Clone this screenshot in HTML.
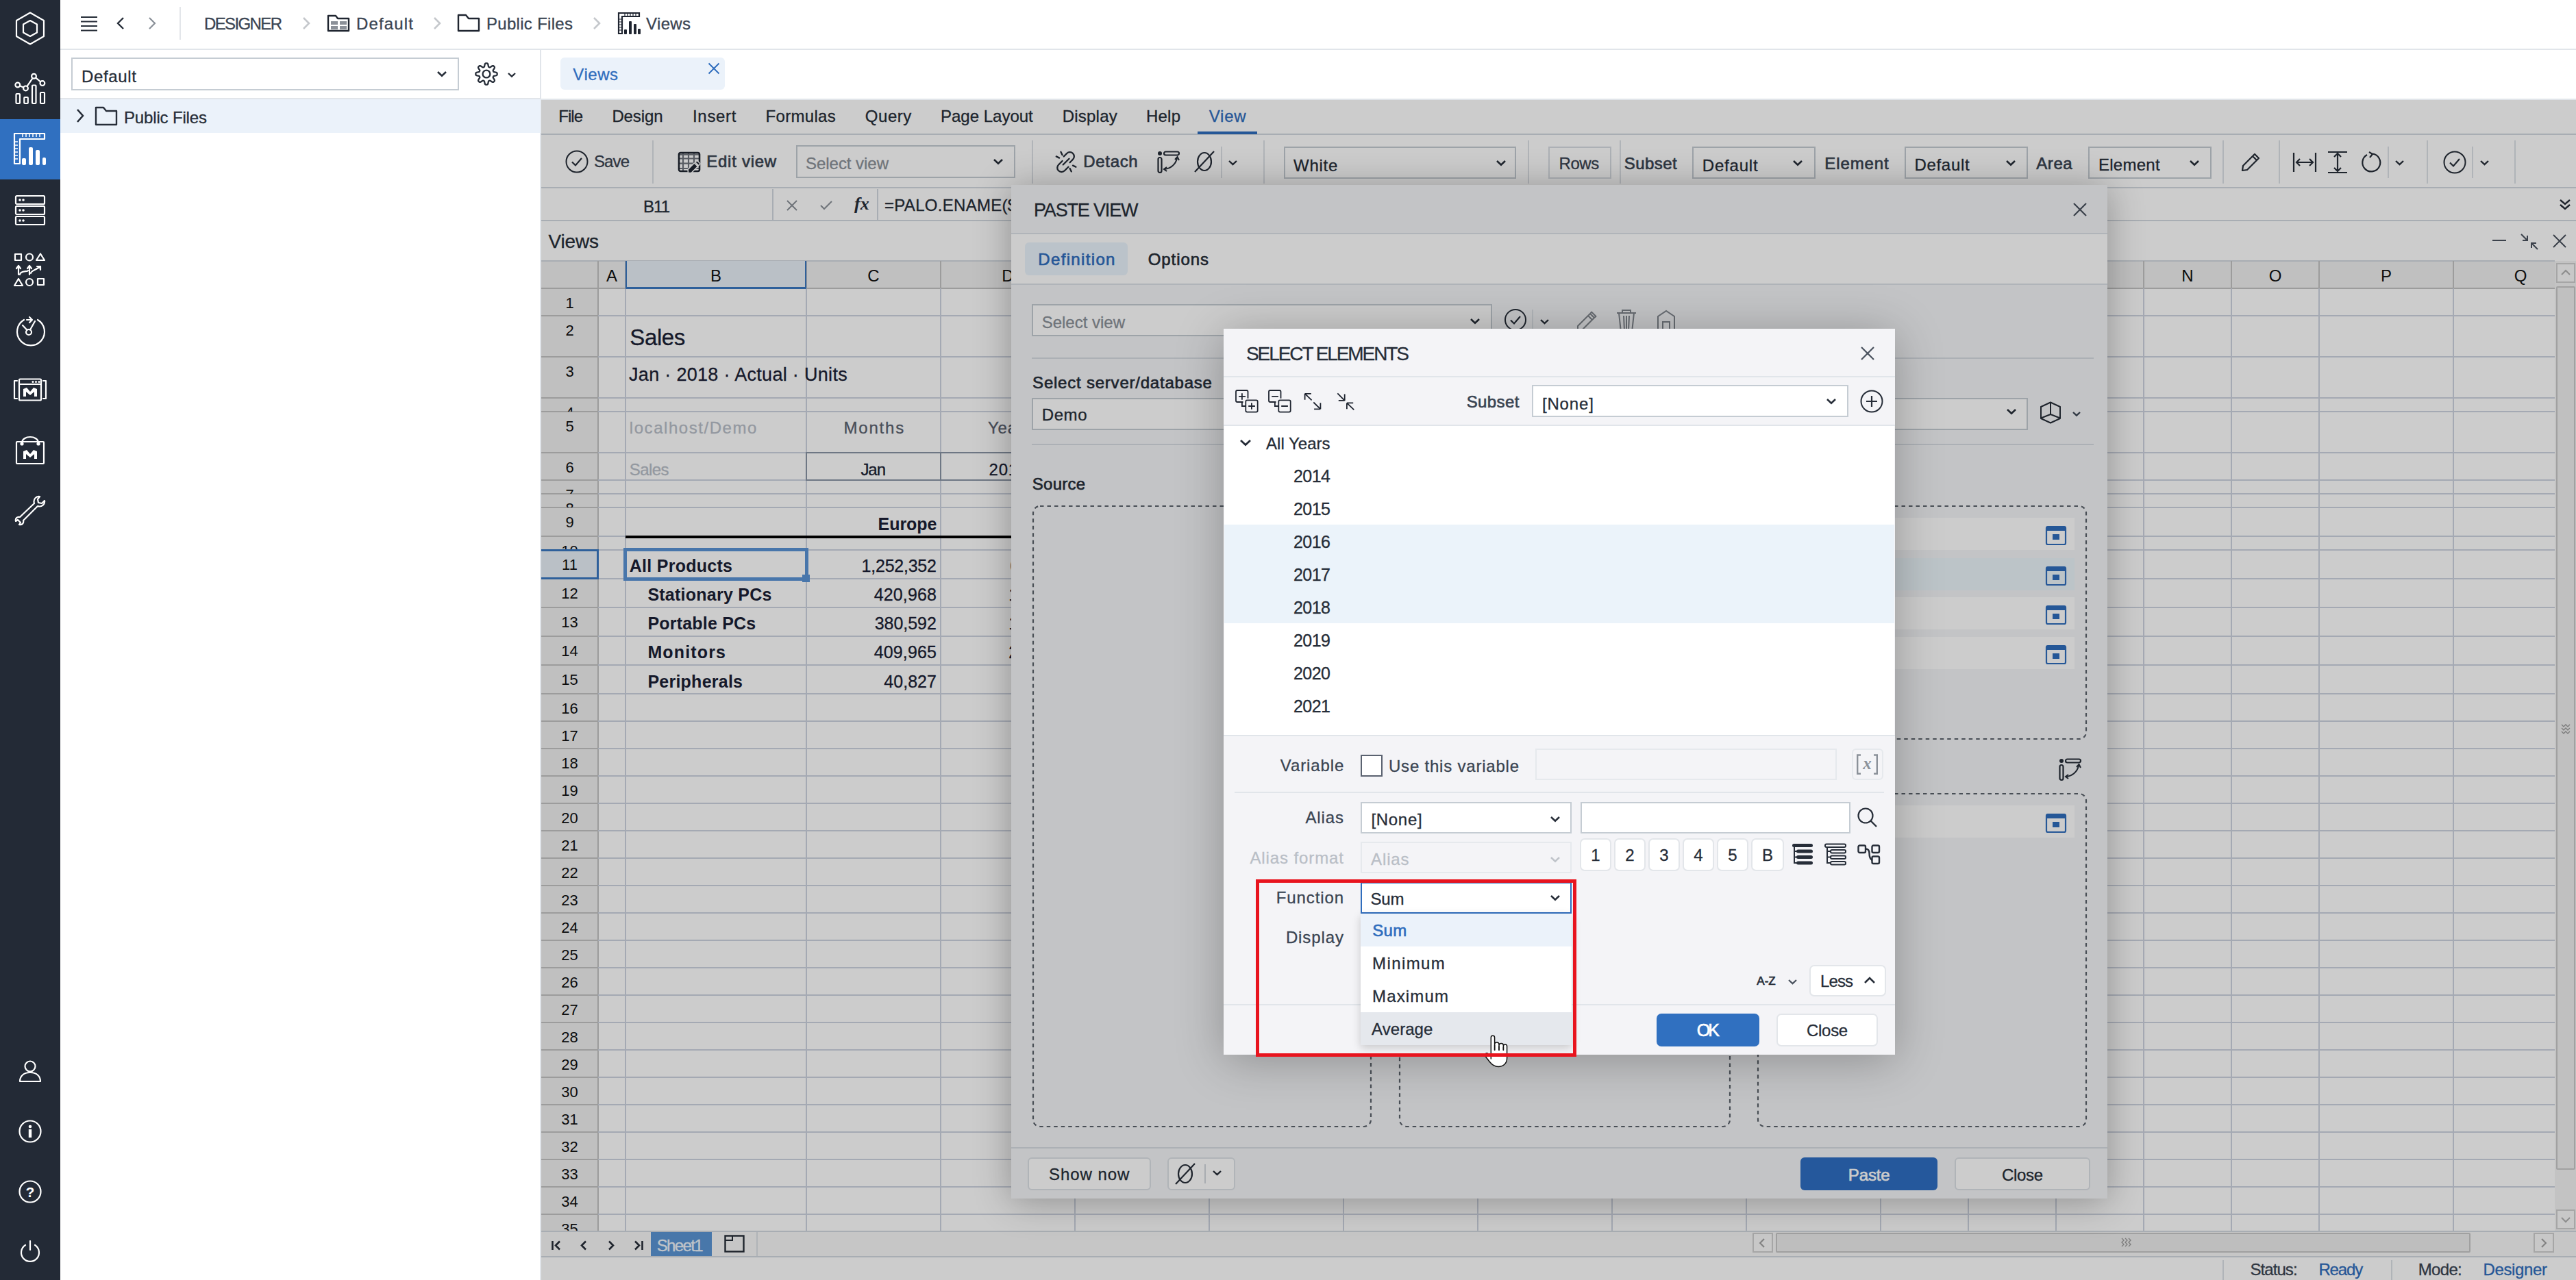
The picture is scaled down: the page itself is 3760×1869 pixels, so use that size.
<!DOCTYPE html>
<html><head><meta charset="utf-8"><style>
html,body{margin:0;padding:0;width:3760px;height:1869px;overflow:hidden;background:#fff;position:relative;font-family:"Liberation Sans",sans-serif}
div{position:absolute;box-sizing:border-box}
.t{white-space:nowrap}
svg{position:absolute;overflow:visible}
</style></head><body>
<div style="left:0px;top:0px;width:88px;height:1869px;background:#232a36"></div>
<div style="left:0px;top:174px;width:88px;height:88px;background:#3070c0"></div>
<svg style="position:absolute;left:20px;top:18px;" width="48" height="48" viewBox="0 0 48 48"><g fill="none" stroke="#fff" stroke-width="2.2" stroke-linejoin="round" stroke-linecap="round"><polygon points="24,0.5 44,12 44,35 24,46.5 4,35 4,12" /><polygon points="24,12 34,17.5 34,29.5 24,35 14,29.5 14,17.5"/></g></svg>
<svg style="position:absolute;left:0px;top:100px;" width="88" height="60" viewBox="0 0 88 60"><g fill="none" stroke="#fff" stroke-width="2.2" stroke-linejoin="round" stroke-linecap="round" stroke-width="2.3"><polyline points="25.8,24 37.5,28.9 49.5,11.3 61.9,21.6"/><circle cx="25.8" cy="24" r="3.4" fill="#232a36"/><circle cx="37.5" cy="28.9" r="3.4" fill="#232a36"/><circle cx="49.5" cy="11.3" r="3.4" fill="#232a36"/><circle cx="61.9" cy="21.6" r="3.4" fill="#232a36"/><rect x="23.5" y="37" width="5.5" height="14" rx="1"/><rect x="35.3" y="42" width="5.5" height="9" rx="1"/><rect x="47" y="24.5" width="5.5" height="26.5" rx="1"/><rect x="59" y="35" width="6" height="16" rx="1"/></g></svg>
<svg style="position:absolute;left:19px;top:193px;" width="50" height="50" viewBox="0 0 50 50"><g fill="none" stroke="#fff" stroke-width="2.2" stroke-linejoin="round" stroke-linecap="round"><path d="M2,2 H46 V10 H10 V46 H2 Z"/></g><g stroke="#fff" stroke-width="1.5"><path d="M14,3v4M19,3v4M24,3v4M29,3v4M34,3v4M39,3v4M3,14h4M3,19h4M3,24h4M3,29h4M3,34h4M3,39h4"/></g><g fill="#fff"><rect x="13" y="38" width="6" height="10" rx="2"/><rect x="23" y="22" width="6" height="26" rx="2"/><rect x="33" y="26" width="6" height="22" rx="2"/><rect x="43" y="37" width="5" height="11" rx="2"/></g></svg>
<svg style="position:absolute;left:21px;top:284px;" width="46" height="46" viewBox="0 0 46 46"><g fill="none" stroke="#fff" stroke-width="2.2" stroke-linejoin="round" stroke-linecap="round"><rect x="2" y="2" width="42" height="12" rx="1.5"/><rect x="2" y="17" width="42" height="12" rx="1.5"/><rect x="2" y="32" width="42" height="12" rx="1.5"/></g><g fill="#fff"><circle cx="8" cy="8" r="1.8"/><circle cx="13" cy="8" r="1.8"/><circle cx="8" cy="23" r="1.8"/><circle cx="13" cy="23" r="1.8"/><circle cx="8" cy="38" r="1.8"/><circle cx="13" cy="38" r="1.8"/></g></svg>
<svg style="position:absolute;left:19px;top:369px;" width="50" height="50" viewBox="0 0 50 50"><g fill="none" stroke="#fff" stroke-width="2.2" stroke-linejoin="round" stroke-linecap="round" stroke-width="2"><rect x="3" y="2" width="9" height="9"/><circle cx="24" cy="6.5" r="5"/><polygon points="40,1.5 46,11 34,11"/><polygon points="8,38 14,48 2,48"/><circle cx="24" cy="43" r="5"/><rect x="36" y="38" width="9" height="9"/><path d="M8,32 V20 M5,23 L8,19 L11,23"/><path d="M24,32 V20 M21,23 L24,19 L27,23"/><path d="M10,32 C10,26 22,28 22,26"/><path d="M26,30 C26,26 32,26 40,20 M35,20 H40 V25"/></g></svg>
<svg style="position:absolute;left:21px;top:457px;" width="46" height="48" viewBox="0 0 46 48"><g fill="none" stroke="#fff" stroke-width="2.2" stroke-linejoin="round" stroke-linecap="round"><path d="M14,10 A20,20 0 1 0 34,10"/><path d="M18,10 H24 M22,6 L26,10 L22,14"/><circle cx="21" cy="28" r="4"/><path d="M18.5,25 L12,18 M23,24.5 L30,12"/></g></svg>
<svg style="position:absolute;left:19px;top:552px;" width="50" height="34" viewBox="0 0 50 34"><g fill="none" stroke="#fff" stroke-width="2.2" stroke-linejoin="round" stroke-linecap="round"><path d="M6,4 H2 V30 H6 M44,4 H48 V30 H44"/><rect x="9" y="1.5" width="32" height="31" rx="1.5"/><path d="M9,9 H41"/></g><g fill="#fff"><circle cx="29" cy="5.5" r="1.5"/><circle cx="33.5" cy="5.5" r="1.5"/><circle cx="38" cy="5.5" r="1.5"/><path d="M15,27 V16 L20,14 L25,20 L30,14 L35,16 V27 H31 V20 L25,25 L19,20 V27Z"/></g></svg>
<svg style="position:absolute;left:22px;top:636px;" width="44" height="42" viewBox="0 0 44 42"><g fill="none" stroke="#fff" stroke-width="2.2" stroke-linejoin="round" stroke-linecap="round"><rect x="2" y="9" width="40" height="32" rx="1"/><path d="M10,11 C10,-1 34,-1 34,11"/></g><g fill="#fff"><circle cx="10" cy="12" r="2.6"/><circle cx="34" cy="12" r="2.6"/><path d="M12,34 V23 L17,21 L22,27 L27,21 L32,23 V34 H28 V27 L22,32 L16,27 V34Z"/></g></svg>
<svg style="position:absolute;left:20px;top:721px;" width="48" height="48" viewBox="0 0 48 48"><g fill="none" stroke="#fff" stroke-width="2.2" stroke-linejoin="round" stroke-linecap="round"><path d="M38,4 C33,3 28,8 30,14 L9,34 C5,33 2,36 3,40 L6,38 L10,42 L8,45 C12,46 15,43 14,39 L35,18 C41,20 46,15 45,10 L41,14 L36,13 L35,8Z"/></g></svg>
<svg style="position:absolute;left:28px;top:1548px;" width="32" height="33" viewBox="0 0 32 33"><g fill="none" stroke="#fff" stroke-width="2.2" stroke-linejoin="round" stroke-linecap="round"><circle cx="16" cy="9" r="7.5"/><path d="M1,31 C1,23 7,18 16,18 C25,18 31,23 31,31 Z"/></g></svg>
<svg style="position:absolute;left:27px;top:1635px;" width="34" height="34" viewBox="0 0 34 34"><g fill="none" stroke="#fff" stroke-width="2.2" stroke-linejoin="round" stroke-linecap="round"><circle cx="17" cy="17" r="15.5"/></g><g fill="#fff"><circle cx="17" cy="10" r="2.3"/><rect x="14.8" y="14" width="4.4" height="12"/></g></svg>
<svg style="position:absolute;left:27px;top:1723px;" width="34" height="34" viewBox="0 0 34 34"><g fill="none" stroke="#fff" stroke-width="2.2" stroke-linejoin="round" stroke-linecap="round"><circle cx="17" cy="17" r="15.5"/></g><text x="17" y="25" text-anchor="middle" font-family="Liberation Sans" font-weight="bold" font-size="21" fill="#fff">?</text></svg>
<svg style="position:absolute;left:27px;top:1811px;" width="34" height="34" viewBox="0 0 34 34"><g fill="none" stroke="#fff" stroke-width="2.2" stroke-linejoin="round" stroke-linecap="round"><path d="M10,7 A13,13 0 1 0 24,7"/><path d="M17,1 V14"/></g></svg>
<div style="left:88px;top:71px;width:3672px;height:2px;background:#e1e5ea"></div>
<svg style="position:absolute;left:116px;top:22px;" width="28" height="26" viewBox="0 0 28 26"><g stroke="#262d38" stroke-width="2.2"><path d="M2,3h24M2,9.5h24M2,16h24M2,22.5h24"/></g></svg>
<svg style="position:absolute;left:168px;top:24px;" width="16" height="20" viewBox="0 0 16 20"><path d="M12,2 L4,10 L12,18" fill="none" stroke="#262d38" stroke-width="2.4"/></svg>
<svg style="position:absolute;left:214px;top:24px;" width="16" height="20" viewBox="0 0 16 20"><path d="M4,2 L12,10 L4,18" fill="none" stroke="#8a9098" stroke-width="2.2"/></svg>
<div style="left:262px;top:10px;width:2px;height:48px;background:#e3e6ea"></div>
<div class="t" style="left:298.0px;top:23px;font-size:24px;line-height:24px;color:#3a4452;-webkit-text-stroke:0.3px #3a4452;letter-spacing:-1.62px;">DESIGNER</div>
<svg style="position:absolute;left:440px;top:24px;" width="14" height="20" viewBox="0 0 14 20"><path d="M3,2 L11,10 L3,18" fill="none" stroke="#c5c8cc" stroke-width="2.6"/></svg>
<svg style="position:absolute;left:631px;top:24px;" width="14" height="20" viewBox="0 0 14 20"><path d="M3,2 L11,10 L3,18" fill="none" stroke="#c5c8cc" stroke-width="2.6"/></svg>
<svg style="position:absolute;left:864px;top:24px;" width="14" height="20" viewBox="0 0 14 20"><path d="M3,2 L11,10 L3,18" fill="none" stroke="#c5c8cc" stroke-width="2.6"/></svg>
<svg style="position:absolute;left:477px;top:19px;" width="34" height="28" viewBox="0 0 34 28"><path d="M2,4 H13 L16,8 H32 V26 H2 Z" fill="none" stroke="#1f2530" stroke-width="2.4" stroke-linejoin="round"/><g fill="#8b9098"><rect x="6" y="12" width="10" height="5"/><rect x="19" y="12" width="10" height="5"/><rect x="6" y="19" width="10" height="5"/><rect x="19" y="19" width="10" height="5"/></g></svg>
<div class="t" style="left:520.0px;top:23px;font-size:24px;line-height:24px;color:#3a4452;-webkit-text-stroke:0.3px #3a4452;letter-spacing:1.16px;">Default</div>
<svg style="position:absolute;left:667px;top:19px;" width="34" height="28" viewBox="0 0 34 28"><path d="M2,3 H13 L17,8 H32 V26 H2 Z" fill="none" stroke="#1f2530" stroke-width="2.4" stroke-linejoin="round"/></svg>
<div class="t" style="left:710.0px;top:23px;font-size:24px;line-height:24px;color:#3a4452;-webkit-text-stroke:0.3px #3a4452;letter-spacing:0.30px;">Public Files</div>
<svg style="position:absolute;left:901px;top:17px;" width="34" height="34" viewBox="0 0 34 34"><path d="M2,2 H32 V7 H7 V32 H2 Z" fill="none" stroke="#1f2530" stroke-width="2.2"/><g stroke="#1f2530" stroke-width="1.2"><path d="M11,3v3M15,3v3M19,3v3M23,3v3M27,3v3M3,11h3M3,15h3M3,19h3M3,23h3M3,27h3"/></g><g fill="#1f2530"><rect x="10" y="26" width="4" height="7" rx="1"/><rect x="17" y="14" width="4" height="19" rx="1"/><rect x="24" y="18" width="4" height="15" rx="1"/><rect x="30" y="25" width="4" height="8" rx="1"/></g></svg>
<div class="t" style="left:943.0px;top:23px;font-size:24px;line-height:24px;color:#3a4452;-webkit-text-stroke:0.3px #3a4452;letter-spacing:0.36px;">Views</div>
<div style="left:88px;top:143px;width:701px;height:2px;background:#e1e5ea"></div>
<div style="left:788px;top:73px;width:2px;height:1796px;background:#e1e5ea"></div>
<div style="left:790px;top:144px;width:2970px;height:2px;background:#e1e5ea"></div>
<div style="left:104px;top:84px;width:566px;height:48px;border:2px solid #c5ccd3;box-sizing:border-box;background:#fff"></div>
<div class="t" style="left:119.0px;top:100px;font-size:24px;line-height:24px;color:#262d38;-webkit-text-stroke:0.3px #262d38;letter-spacing:0.66px;">Default</div>
<svg style="position:absolute;left:637px;top:103px;" width="16" height="11" viewBox="0 0 16 11"><path d="M2,2 L8.0,7.64 L14,2" fill="none" stroke="#262d38" stroke-width="2.6"/></svg>
<svg style="position:absolute;left:693px;top:91px;" width="34" height="34" viewBox="0 0 34 34"><g fill="none" stroke="#262d38" stroke-width="2.3" stroke-linejoin="round"><path d="M17.00,1.30 L17.41,1.32 L17.82,1.39 L18.22,1.51 L18.60,1.74 L18.96,2.13 L19.26,2.74 L19.49,3.58 L19.65,4.53 L19.79,5.37 L19.95,5.99 L20.14,6.40 L20.36,6.67 L20.59,6.85 L20.84,7.00 L21.09,7.11 L21.36,7.21 L21.63,7.28 L21.93,7.32 L22.28,7.28 L22.70,7.13 L23.25,6.80 L23.94,6.31 L24.73,5.75 L25.49,5.32 L26.13,5.10 L26.66,5.08 L27.09,5.19 L27.46,5.38 L27.80,5.62 L28.10,5.90 L28.38,6.20 L28.62,6.54 L28.81,6.91 L28.92,7.34 L28.90,7.87 L28.68,8.51 L28.25,9.27 L27.69,10.06 L27.20,10.75 L26.87,11.30 L26.72,11.72 L26.68,12.07 L26.72,12.37 L26.79,12.64 L26.89,12.91 L27.00,13.16 L27.15,13.41 L27.33,13.64 L27.60,13.86 L28.01,14.05 L28.63,14.21 L29.47,14.35 L30.42,14.51 L31.26,14.74 L31.87,15.04 L32.26,15.40 L32.49,15.78 L32.61,16.18 L32.68,16.59 L32.70,17.00 L32.68,17.41 L32.61,17.82 L32.49,18.22 L32.26,18.60 L31.87,18.96 L31.26,19.26 L30.42,19.49 L29.47,19.65 L28.63,19.79 L28.01,19.95 L27.60,20.14 L27.33,20.36 L27.15,20.59 L27.00,20.84 L26.89,21.09 L26.79,21.36 L26.72,21.63 L26.68,21.93 L26.72,22.28 L26.87,22.70 L27.20,23.25 L27.69,23.94 L28.25,24.73 L28.68,25.49 L28.90,26.13 L28.92,26.66 L28.81,27.09 L28.62,27.46 L28.38,27.80 L28.10,28.10 L27.80,28.38 L27.46,28.62 L27.09,28.81 L26.66,28.92 L26.13,28.90 L25.49,28.68 L24.73,28.25 L23.94,27.69 L23.25,27.20 L22.70,26.87 L22.28,26.72 L21.93,26.68 L21.63,26.72 L21.36,26.79 L21.09,26.89 L20.84,27.00 L20.59,27.15 L20.36,27.33 L20.14,27.60 L19.95,28.01 L19.79,28.63 L19.65,29.47 L19.49,30.42 L19.26,31.26 L18.96,31.87 L18.60,32.26 L18.22,32.49 L17.82,32.61 L17.41,32.68 L17.00,32.70 L16.59,32.68 L16.18,32.61 L15.78,32.49 L15.40,32.26 L15.04,31.87 L14.74,31.26 L14.51,30.42 L14.35,29.47 L14.21,28.63 L14.05,28.01 L13.86,27.60 L13.64,27.33 L13.41,27.15 L13.16,27.00 L12.91,26.89 L12.64,26.79 L12.37,26.72 L12.07,26.68 L11.72,26.72 L11.30,26.87 L10.75,27.20 L10.06,27.69 L9.27,28.25 L8.51,28.68 L7.87,28.90 L7.34,28.92 L6.91,28.81 L6.54,28.62 L6.20,28.38 L5.90,28.10 L5.62,27.80 L5.38,27.46 L5.19,27.09 L5.08,26.66 L5.10,26.13 L5.32,25.49 L5.75,24.73 L6.31,23.94 L6.80,23.25 L7.13,22.70 L7.28,22.28 L7.32,21.93 L7.28,21.63 L7.21,21.36 L7.11,21.09 L7.00,20.84 L6.85,20.59 L6.67,20.36 L6.40,20.14 L5.99,19.95 L5.37,19.79 L4.53,19.65 L3.58,19.49 L2.74,19.26 L2.13,18.96 L1.74,18.60 L1.51,18.22 L1.39,17.82 L1.32,17.41 L1.30,17.00 L1.32,16.59 L1.39,16.18 L1.51,15.78 L1.74,15.40 L2.13,15.04 L2.74,14.74 L3.58,14.51 L4.53,14.35 L5.37,14.21 L5.99,14.05 L6.40,13.86 L6.67,13.64 L6.85,13.41 L7.00,13.16 L7.11,12.91 L7.21,12.64 L7.28,12.37 L7.32,12.07 L7.28,11.72 L7.13,11.30 L6.80,10.75 L6.31,10.06 L5.75,9.27 L5.32,8.51 L5.10,7.87 L5.08,7.34 L5.19,6.91 L5.38,6.54 L5.62,6.20 L5.90,5.90 L6.20,5.62 L6.54,5.38 L6.91,5.19 L7.34,5.08 L7.87,5.10 L8.51,5.32 L9.27,5.75 L10.06,6.31 L10.75,6.80 L11.30,7.13 L11.72,7.28 L12.07,7.32 L12.37,7.28 L12.64,7.21 L12.91,7.11 L13.16,7.00 L13.41,6.85 L13.64,6.67 L13.86,6.40 L14.05,5.99 L14.21,5.37 L14.35,4.53 L14.51,3.58 L14.74,2.74 L15.04,2.13 L15.40,1.74 L15.78,1.51 L16.18,1.39 L16.59,1.32Z"/><circle cx="17" cy="17" r="5.4"/></g></svg>
<svg style="position:absolute;left:740px;top:105px;" width="14" height="10" viewBox="0 0 14 10"><path d="M2,2 L7.0,6.699999999999999 L12,2" fill="none" stroke="#262d38" stroke-width="2.4"/></svg>
<div style="left:88px;top:145px;width:701px;height:49px;background:#ebf2fa"></div>
<svg style="position:absolute;left:110px;top:158px;" width="14" height="22" viewBox="0 0 14 22"><path d="M3,2 L11,11 L3,20" fill="none" stroke="#262d38" stroke-width="2.6"/></svg>
<svg style="position:absolute;left:138px;top:154px;" width="34" height="30" viewBox="0 0 34 30"><path d="M2,3 H13 L17,8 H32 V28 H2 Z" fill="none" stroke="#262d38" stroke-width="2.4" stroke-linejoin="round"/></svg>
<div class="t" style="left:181.0px;top:160px;font-size:24px;line-height:24px;color:#262d38;-webkit-text-stroke:0.3px #262d38;letter-spacing:-0.16px;">Public Files</div>
<div style="left:818px;top:84px;width:240px;height:47px;background:#ebf2fa;border-radius:6px"></div>
<div class="t" style="left:836.3px;top:97px;font-size:24px;line-height:24px;color:#2f6dbd;-webkit-text-stroke:0.3px #2f6dbd;letter-spacing:0.53px;">Views</div>
<svg style="position:absolute;left:1033px;top:91px;" width="18" height="18" viewBox="0 0 18 18"><path d="M1.5,1.5 L16.5,16.5 M16.5,1.5 L1.5,16.5" stroke="#2f6dbd" stroke-width="1.9"/></svg>
<div style="left:790px;top:146px;width:2970px;height:1652px;background:#fff"></div>
<div style="left:790px;top:195px;width:2970px;height:2px;background:#d3d9e0"></div>
<div class="t" style="left:815.3px;top:158px;font-size:24px;line-height:24px;color:#262d38;-webkit-text-stroke:0.3px #262d38;letter-spacing:-0.99px;">File</div>
<div class="t" style="left:893.4px;top:158px;font-size:24px;line-height:24px;color:#262d38;-webkit-text-stroke:0.3px #262d38;letter-spacing:-0.12px;">Design</div>
<div class="t" style="left:1011.0px;top:158px;font-size:24px;line-height:24px;color:#262d38;-webkit-text-stroke:0.3px #262d38;letter-spacing:0.68px;">Insert</div>
<div class="t" style="left:1117.5px;top:158px;font-size:24px;line-height:24px;color:#262d38;-webkit-text-stroke:0.3px #262d38;letter-spacing:0.31px;">Formulas</div>
<div class="t" style="left:1262.8px;top:158px;font-size:24px;line-height:24px;color:#262d38;-webkit-text-stroke:0.3px #262d38;letter-spacing:0.54px;">Query</div>
<div class="t" style="left:1373.0px;top:158px;font-size:24px;line-height:24px;color:#262d38;-webkit-text-stroke:0.3px #262d38;">Page Layout</div>
<div class="t" style="left:1550.7px;top:158px;font-size:24px;line-height:24px;color:#262d38;-webkit-text-stroke:0.3px #262d38;letter-spacing:0.22px;">Display</div>
<div class="t" style="left:1673.0px;top:158px;font-size:24px;line-height:24px;color:#262d38;-webkit-text-stroke:0.3px #262d38;letter-spacing:0.21px;">Help</div>
<div class="t" style="left:1764.7px;top:158px;font-size:24px;line-height:24px;color:#2f6dbd;-webkit-text-stroke:0.3px #2f6dbd;letter-spacing:0.78px;">View</div>
<div style="left:1748px;top:192px;width:87px;height:4px;background:#2f6dbd"></div>
<div style="left:790px;top:273px;width:2970px;height:2px;background:#d3d9e0"></div>
<svg style="position:absolute;left:825px;top:219px;" width="34" height="34" viewBox="0 0 34 34"><circle cx="17" cy="17" r="15.5" fill="none" stroke="#262d38" stroke-width="2"/><path d="M10,17.5 L15,22.5 L24,12" fill="none" stroke="#262d38" stroke-width="2.2"/></svg>
<div class="t" style="left:867.0px;top:224px;font-size:24px;line-height:24px;color:#3a4452;-webkit-text-stroke:0.3px #3a4452;letter-spacing:-0.90px;">Save</div>
<div style="left:952px;top:205px;width:2px;height:63px;background:#dde1e6"></div>
<svg style="position:absolute;left:989px;top:221px;" width="36" height="34" viewBox="0 0 36 34"><g stroke="#6e747c" stroke-width="2.2"><path d="M3,4.6H31M3,10.5H31M3,17.7H31M3,25H31M8,3V28M16,3V28M24,3V28"/></g><rect x="2" y="2" width="30" height="27" rx="2.5" fill="none" stroke="#1f2530" stroke-width="2.6"/><path d="M15.5,31.5 L15,26.5 L24.5,17 L29.5,22 L20,31.5 Z" fill="#1f2530" stroke="#fff" stroke-width="1.6" stroke-linejoin="round"/><path d="M25.8,15.7 L28.3,13.2 L33.3,18.2 L30.8,20.7 Z" fill="#1f2530" stroke="#fff" stroke-width="1.4" stroke-linejoin="round"/></svg>
<div class="t" style="left:1031.3px;top:224px;font-size:24px;line-height:24px;color:#3a4452;-webkit-text-stroke:0.65px #3a4452;letter-spacing:0.73px;">Edit view</div>
<div style="left:1162px;top:212px;width:320px;height:48px;border:2px solid #c5ccd3;background:#fff"></div>
<div class="t" style="left:1176.0px;top:227px;font-size:24px;line-height:24px;color:#8b9199;-webkit-text-stroke:0.3px #8b9199;letter-spacing:-0.04px;">Select view</div>
<svg style="position:absolute;left:1449px;top:231px;" width="16" height="11" viewBox="0 0 16 11"><path d="M2,2 L8.0,7.64 L14,2" fill="none" stroke="#262d38" stroke-width="2.6"/></svg>
<div style="left:1506px;top:205px;width:2px;height:63px;background:#dde1e6"></div>
<svg style="position:absolute;left:1540px;top:220px;" width="32" height="32" viewBox="0 0 32 32"><g transform="translate(-1.5,-1.5) scale(1.1)" fill="none" stroke="#262d38" stroke-width="2.1" stroke-linecap="round"><path d="M13,9 L17,5 a5.5,5.5 0 0 1 8,8 L21,17"/><path d="M11,15 L6,20 a5.5,5.5 0 0 0 8,8 L19,23"/><path d="M12,20 L20,12"/><path d="M9,3 L11,7 M3,9 L7,11 M25,21 L29,23 M21,25 L23,29"/></g></svg>
<div class="t" style="left:1581.3px;top:224px;font-size:24px;line-height:24px;color:#3a4452;-webkit-text-stroke:0.65px #3a4452;letter-spacing:0.67px;">Detach</div>
<svg style="position:absolute;left:1689px;top:220px;" width="34" height="34" viewBox="0 0 34 34"><circle cx="4" cy="4" r="3" fill="#262d38"/><rect x="1.5" y="10" width="5" height="22" rx="2.5" fill="none" stroke="#262d38" stroke-width="2.2"/><rect x="10" y="1.5" width="22" height="5" rx="2.5" fill="none" stroke="#262d38" stroke-width="2.2"/><path d="M11,27 C20,26 27,20 29,11" fill="none" stroke="#262d38" stroke-width="2"/><path d="M26,13 L29.5,9 L32,14 M14,24 L10,27 L14,30" fill="none" stroke="#262d38" stroke-width="2"/></svg>
<svg style="position:absolute;left:1742px;top:219px;" width="32" height="34" viewBox="0 0 32 34"><ellipse cx="16" cy="17" rx="10" ry="13" fill="none" stroke="#262d38" stroke-width="2.2"/><path d="M2,32 L30,2" stroke="#262d38" stroke-width="2.2"/></svg>
<div style="left:1782px;top:214px;width:2px;height:46px;background:#dde1e6"></div>
<svg style="position:absolute;left:1792px;top:233px;" width="15" height="11" viewBox="0 0 15 11"><path d="M2,2 L7.5,7.17 L13,2" fill="none" stroke="#262d38" stroke-width="2.4"/></svg>
<div style="left:1844px;top:205px;width:2px;height:63px;background:#dde1e6"></div>
<div style="left:1874px;top:214px;width:339px;height:47px;border:2px solid #c5ccd3;background:#fff"></div>
<div class="t" style="left:1888.0px;top:230px;font-size:24px;line-height:24px;color:#262d38;-webkit-text-stroke:0.3px #262d38;letter-spacing:0.76px;">White</div>
<svg style="position:absolute;left:2183px;top:233px;" width="16" height="11" viewBox="0 0 16 11"><path d="M2,2 L8.0,7.64 L14,2" fill="none" stroke="#262d38" stroke-width="2.6"/></svg>
<div style="left:2230px;top:205px;width:2px;height:63px;background:#dde1e6"></div>
<div style="left:2260px;top:214px;width:92px;height:47px;border:2px solid #d8dde3;background:#fff"></div>
<div class="t" style="left:2275.5px;top:227px;font-size:24px;line-height:24px;color:#3a4452;-webkit-text-stroke:0.3px #3a4452;letter-spacing:-0.41px;">Rows</div>
<div style="left:2364px;top:205px;width:2px;height:63px;background:#dde1e6"></div>
<div class="t" style="left:2370.8px;top:227px;font-size:24px;line-height:24px;color:#3a4452;-webkit-text-stroke:0.65px #3a4452;letter-spacing:0.44px;">Subset</div>
<div style="left:2470px;top:214px;width:180px;height:47px;border:2px solid #c5ccd3;background:#fff"></div>
<div class="t" style="left:2484.8px;top:230px;font-size:24px;line-height:24px;color:#262d38;-webkit-text-stroke:0.3px #262d38;letter-spacing:0.79px;">Default</div>
<svg style="position:absolute;left:2616px;top:233px;" width="16" height="11" viewBox="0 0 16 11"><path d="M2,2 L8.0,7.64 L14,2" fill="none" stroke="#262d38" stroke-width="2.6"/></svg>
<div class="t" style="left:2663.3px;top:227px;font-size:24px;line-height:24px;color:#3a4452;-webkit-text-stroke:0.65px #3a4452;letter-spacing:0.89px;">Element</div>
<div style="left:2780px;top:214px;width:180px;height:47px;border:2px solid #c5ccd3;background:#fff"></div>
<div class="t" style="left:2794.4px;top:229px;font-size:24px;line-height:24px;color:#262d38;-webkit-text-stroke:0.3px #262d38;letter-spacing:0.71px;">Default</div>
<svg style="position:absolute;left:2927px;top:233px;" width="16" height="11" viewBox="0 0 16 11"><path d="M2,2 L8.0,7.64 L14,2" fill="none" stroke="#262d38" stroke-width="2.6"/></svg>
<div class="t" style="left:2972.3px;top:227px;font-size:24px;line-height:24px;color:#3a4452;-webkit-text-stroke:0.65px #3a4452;letter-spacing:0.56px;">Area</div>
<div style="left:3048px;top:214px;width:180px;height:47px;border:2px solid #c5ccd3;background:#fff"></div>
<div class="t" style="left:3063.0px;top:229px;font-size:24px;line-height:24px;color:#262d38;-webkit-text-stroke:0.3px #262d38;letter-spacing:0.26px;">Element</div>
<svg style="position:absolute;left:3195px;top:233px;" width="16" height="11" viewBox="0 0 16 11"><path d="M2,2 L8.0,7.64 L14,2" fill="none" stroke="#262d38" stroke-width="2.6"/></svg>
<div style="left:3244px;top:205px;width:2px;height:63px;background:#dde1e6"></div>
<svg style="position:absolute;left:3269px;top:221px;" width="32" height="32" viewBox="0 0 32 32"><path d="M4,28 L5,21 L22,4 L28,10 L11,27 Z M19,7 L25,13" fill="none" stroke="#262d38" stroke-width="2.2" stroke-linejoin="round"/></svg>
<div style="left:3326px;top:205px;width:2px;height:63px;background:#dde1e6"></div>
<svg style="position:absolute;left:3346px;top:221px;" width="36" height="32" viewBox="0 0 36 32"><g stroke="#262d38" stroke-width="2.2" fill="none"><path d="M2,2 V30 M34,2 V30 M6,16 H30 M11,11 L6,16 L11,21 M25,11 L30,16 L25,21"/></g></svg>
<svg style="position:absolute;left:3397px;top:220px;" width="30" height="34" viewBox="0 0 30 34"><g stroke="#262d38" stroke-width="2.2" fill="none"><path d="M1,2 H29 M1,32 H29 M15,4 V30 M10,9 L15,4 L20,9 M10,25 L15,30 L20,25"/></g></svg>
<svg style="position:absolute;left:3445px;top:221px;" width="32" height="32" viewBox="0 0 32 32"><g stroke="#262d38" stroke-width="2.2" fill="none"><path d="M10,5 A13,13 0 1 0 18,3.5"/><path d="M13,1 L18,4 L14,9"/></g></svg>
<div style="left:3485px;top:214px;width:2px;height:46px;background:#dde1e6"></div>
<svg style="position:absolute;left:3495px;top:233px;" width="15" height="11" viewBox="0 0 15 11"><path d="M2,2 L7.5,7.17 L13,2" fill="none" stroke="#262d38" stroke-width="2.4"/></svg>
<div style="left:3542px;top:205px;width:2px;height:63px;background:#dde1e6"></div>
<svg style="position:absolute;left:3566px;top:220px;" width="34" height="34" viewBox="0 0 34 34"><circle cx="17" cy="17" r="15.5" fill="none" stroke="#262d38" stroke-width="2"/><path d="M10,17.5 L15,22.5 L24,12" fill="none" stroke="#262d38" stroke-width="2.2"/></svg>
<div style="left:3608px;top:214px;width:2px;height:46px;background:#dde1e6"></div>
<svg style="position:absolute;left:3619px;top:233px;" width="15" height="11" viewBox="0 0 15 11"><path d="M2,2 L7.5,7.17 L13,2" fill="none" stroke="#262d38" stroke-width="2.4"/></svg>
<div style="left:3670px;top:205px;width:2px;height:63px;background:#dde1e6"></div>
<div style="left:790px;top:321px;width:2970px;height:2px;background:#d3d9e0"></div>
<div class="t" style="left:939.0px;top:290px;font-size:24px;line-height:24px;color:#262d38;-webkit-text-stroke:0.3px #262d38;letter-spacing:-0.96px;">B11</div>
<div style="left:1127px;top:276px;width:2px;height:45px;background:#d3d9e0"></div>
<svg style="position:absolute;left:1147px;top:291px;" width="18" height="18" viewBox="0 0 18 18"><path d="M2,2 L16,16 M16,2 L2,16" stroke="#8b9199" stroke-width="2"/></svg>
<svg style="position:absolute;left:1196px;top:292px;" width="20" height="16" viewBox="0 0 20 16"><path d="M2,8 L7,13 L18,2" fill="none" stroke="#8b9199" stroke-width="2"/></svg>
<div class="t" style="left:1247px;top:285px;font-family:'Liberation Serif';font-style:italic;font-weight:bold;font-size:26px;line-height:26px;color:#262d38">fx</div>
<div style="left:1280px;top:276px;width:2px;height:45px;background:#d3d9e0"></div>
<div class="t" style="left:1291.0px;top:288px;font-size:24px;line-height:24px;color:#262d38;-webkit-text-stroke:0.3px #262d38;letter-spacing:0.30px;">=PALO.ENAME($B$6,$B$5,</div>
<svg style="position:absolute;left:3735px;top:290px;" width="18" height="18" viewBox="0 0 18 18"><path d="M2,2 L9,8 L16,2 M2,9 L9,15 L16,9" fill="none" stroke="#262d38" stroke-width="2.4"/></svg>
<div class="t" style="left:800.6px;top:339px;font-size:28px;line-height:28px;color:#262d38;-webkit-text-stroke:0.3px #262d38;letter-spacing:-0.19px;">Views</div>
<div style="left:3638px;top:350px;width:20px;height:2px;background:#4a525e"></div>
<svg style="position:absolute;left:3678px;top:340px;" width="28" height="26" viewBox="0 0 28 26"><g stroke="#4a525e" stroke-width="2" fill="none"><path d="M2,2 L11,11 M11,4 V11 H4 M26,24 L17,15 M17,22 V15 H24"/></g></svg>
<svg style="position:absolute;left:3725px;top:341px;" width="22" height="22" viewBox="0 0 22 22"><path d="M2,2 L20,20 M20,2 L2,20" stroke="#4a525e" stroke-width="2"/></svg>
<div style="left:790px;top:381px;width:2939px;height:40px;background:#f0f0f0"></div>
<div style="left:790px;top:421px;width:83px;height:1377px;background:#f0f0f0"></div>
<div style="left:790px;top:380px;width:2939px;height:2px;background:#d3d9e0"></div>
<div style="left:790px;top:420px;width:2939px;height:2px;background:#c4c4c4"></div>
<div style="left:913px;top:381px;width:264px;height:40px;background:#e9f1f8;border:2px solid #3a78c2;border-top:none"></div>
<div style="left:790px;top:803px;width:83px;height:42px;background:#e9f1f8;border:2px solid #3a78c2;border-left:none"></div>
<div style="left:790px;top:381px;width:2939px;height:1417px;overflow:hidden">
<div style="left:122px;top:0px;width:2px;height:40px;background:#c4c4c4"></div>
<div style="left:122px;top:40px;width:2px;height:1377px;background:#ced4e0"></div>
<div class="t" style="left:83px;width:40px;text-align:center;top:10px;font-size:24px;line-height:24px;color:#111">A</div>
<div style="left:386px;top:0px;width:2px;height:40px;background:#c4c4c4"></div>
<div style="left:386px;top:40px;width:2px;height:1377px;background:#ced4e0"></div>
<div class="t" style="left:123px;width:264px;text-align:center;top:10px;font-size:24px;line-height:24px;color:#111">B</div>
<div style="left:582px;top:0px;width:2px;height:40px;background:#c4c4c4"></div>
<div style="left:582px;top:40px;width:2px;height:1377px;background:#ced4e0"></div>
<div class="t" style="left:387px;width:196px;text-align:center;top:10px;font-size:24px;line-height:24px;color:#111">C</div>
<div style="left:778px;top:0px;width:2px;height:40px;background:#c4c4c4"></div>
<div style="left:778px;top:40px;width:2px;height:1377px;background:#ced4e0"></div>
<div class="t" style="left:583px;width:196px;text-align:center;top:10px;font-size:24px;line-height:24px;color:#111">D</div>
<div style="left:974px;top:0px;width:2px;height:40px;background:#c4c4c4"></div>
<div style="left:974px;top:40px;width:2px;height:1377px;background:#ced4e0"></div>
<div class="t" style="left:779px;width:196px;text-align:center;top:10px;font-size:24px;line-height:24px;color:#111">E</div>
<div style="left:1170px;top:0px;width:2px;height:40px;background:#c4c4c4"></div>
<div style="left:1170px;top:40px;width:2px;height:1377px;background:#ced4e0"></div>
<div class="t" style="left:975px;width:196px;text-align:center;top:10px;font-size:24px;line-height:24px;color:#111">F</div>
<div style="left:1366px;top:0px;width:2px;height:40px;background:#c4c4c4"></div>
<div style="left:1366px;top:40px;width:2px;height:1377px;background:#ced4e0"></div>
<div class="t" style="left:1171px;width:196px;text-align:center;top:10px;font-size:24px;line-height:24px;color:#111">G</div>
<div style="left:1562px;top:0px;width:2px;height:40px;background:#c4c4c4"></div>
<div style="left:1562px;top:40px;width:2px;height:1377px;background:#ced4e0"></div>
<div class="t" style="left:1367px;width:196px;text-align:center;top:10px;font-size:24px;line-height:24px;color:#111">H</div>
<div style="left:1758px;top:0px;width:2px;height:40px;background:#c4c4c4"></div>
<div style="left:1758px;top:40px;width:2px;height:1377px;background:#ced4e0"></div>
<div class="t" style="left:1563px;width:196px;text-align:center;top:10px;font-size:24px;line-height:24px;color:#111">I</div>
<div style="left:1954px;top:0px;width:2px;height:40px;background:#c4c4c4"></div>
<div style="left:1954px;top:40px;width:2px;height:1377px;background:#ced4e0"></div>
<div class="t" style="left:1759px;width:196px;text-align:center;top:10px;font-size:24px;line-height:24px;color:#111">J</div>
<div style="left:2082px;top:0px;width:2px;height:40px;background:#c4c4c4"></div>
<div style="left:2082px;top:40px;width:2px;height:1377px;background:#ced4e0"></div>
<div class="t" style="left:1955px;width:128px;text-align:center;top:10px;font-size:24px;line-height:24px;color:#111">K</div>
<div style="left:2210px;top:0px;width:2px;height:40px;background:#c4c4c4"></div>
<div style="left:2210px;top:40px;width:2px;height:1377px;background:#ced4e0"></div>
<div class="t" style="left:2083px;width:128px;text-align:center;top:10px;font-size:24px;line-height:24px;color:#111">L</div>
<div style="left:2338px;top:0px;width:2px;height:40px;background:#c4c4c4"></div>
<div style="left:2338px;top:40px;width:2px;height:1377px;background:#ced4e0"></div>
<div class="t" style="left:2211px;width:128px;text-align:center;top:10px;font-size:24px;line-height:24px;color:#111">M</div>
<div style="left:2466px;top:0px;width:2px;height:40px;background:#c4c4c4"></div>
<div style="left:2466px;top:40px;width:2px;height:1377px;background:#ced4e0"></div>
<div class="t" style="left:2339px;width:128px;text-align:center;top:10px;font-size:24px;line-height:24px;color:#111">N</div>
<div style="left:2594px;top:0px;width:2px;height:40px;background:#c4c4c4"></div>
<div style="left:2594px;top:40px;width:2px;height:1377px;background:#ced4e0"></div>
<div class="t" style="left:2467px;width:128px;text-align:center;top:10px;font-size:24px;line-height:24px;color:#111">O</div>
<div style="left:2790px;top:0px;width:2px;height:40px;background:#c4c4c4"></div>
<div style="left:2790px;top:40px;width:2px;height:1377px;background:#ced4e0"></div>
<div class="t" style="left:2595px;width:196px;text-align:center;top:10px;font-size:24px;line-height:24px;color:#111">P</div>
<div style="left:2986px;top:0px;width:2px;height:40px;background:#c4c4c4"></div>
<div style="left:2986px;top:40px;width:2px;height:1377px;background:#ced4e0"></div>
<div class="t" style="left:2791px;width:196px;text-align:center;top:10px;font-size:24px;line-height:24px;color:#111">Q</div>
<div style="left:82px;top:0px;width:2px;height:1417px;background:#c4c4c4"></div>
<div style="left:0px;top:79px;width:83px;height:2px;background:#c4c4c4"></div>
<div style="left:83px;top:79px;width:2856px;height:2px;background:#ced4e0"></div>
<div style="left:0px;top:40px;width:83px;height:40px;overflow:hidden"><div class="t" style="left:0;width:83px;text-align:center;top:11px;font-size:22px;line-height:22px;color:#111">1</div></div>
<div style="left:0px;top:139px;width:83px;height:2px;background:#c4c4c4"></div>
<div style="left:83px;top:139px;width:2856px;height:2px;background:#ced4e0"></div>
<div style="left:0px;top:80px;width:83px;height:60px;overflow:hidden"><div class="t" style="left:0;width:83px;text-align:center;top:11px;font-size:22px;line-height:22px;color:#111">2</div></div>
<div style="left:0px;top:199px;width:83px;height:2px;background:#c4c4c4"></div>
<div style="left:83px;top:199px;width:2856px;height:2px;background:#ced4e0"></div>
<div style="left:0px;top:140px;width:83px;height:60px;overflow:hidden"><div class="t" style="left:0;width:83px;text-align:center;top:11px;font-size:22px;line-height:22px;color:#111">3</div></div>
<div style="left:0px;top:219px;width:83px;height:2px;background:#c4c4c4"></div>
<div style="left:83px;top:219px;width:2856px;height:2px;background:#ced4e0"></div>
<div style="left:0px;top:200px;width:83px;height:20px;overflow:hidden"><div class="t" style="left:0;width:83px;text-align:center;top:11px;font-size:22px;line-height:22px;color:#111">4</div></div>
<div style="left:0px;top:279px;width:83px;height:2px;background:#c4c4c4"></div>
<div style="left:83px;top:279px;width:2856px;height:2px;background:#ced4e0"></div>
<div style="left:0px;top:220px;width:83px;height:60px;overflow:hidden"><div class="t" style="left:0;width:83px;text-align:center;top:11px;font-size:22px;line-height:22px;color:#111">5</div></div>
<div style="left:0px;top:319px;width:83px;height:2px;background:#c4c4c4"></div>
<div style="left:83px;top:319px;width:2856px;height:2px;background:#ced4e0"></div>
<div style="left:0px;top:280px;width:83px;height:40px;overflow:hidden"><div class="t" style="left:0;width:83px;text-align:center;top:11px;font-size:22px;line-height:22px;color:#111">6</div></div>
<div style="left:0px;top:339px;width:83px;height:2px;background:#c4c4c4"></div>
<div style="left:83px;top:339px;width:2856px;height:2px;background:#ced4e0"></div>
<div style="left:0px;top:320px;width:83px;height:20px;overflow:hidden"><div class="t" style="left:0;width:83px;text-align:center;top:11px;font-size:22px;line-height:22px;color:#111">7</div></div>
<div style="left:0px;top:359px;width:83px;height:2px;background:#c4c4c4"></div>
<div style="left:83px;top:359px;width:2856px;height:2px;background:#ced4e0"></div>
<div style="left:0px;top:340px;width:83px;height:20px;overflow:hidden"><div class="t" style="left:0;width:83px;text-align:center;top:11px;font-size:22px;line-height:22px;color:#111">8</div></div>
<div style="left:0px;top:401px;width:83px;height:2px;background:#c4c4c4"></div>
<div style="left:83px;top:401px;width:2856px;height:2px;background:#ced4e0"></div>
<div style="left:0px;top:360px;width:83px;height:42px;overflow:hidden"><div class="t" style="left:0;width:83px;text-align:center;top:11px;font-size:22px;line-height:22px;color:#111">9</div></div>
<div style="left:0px;top:421px;width:83px;height:2px;background:#c4c4c4"></div>
<div style="left:83px;top:421px;width:2856px;height:2px;background:#ced4e0"></div>
<div style="left:0px;top:402px;width:83px;height:20px;overflow:hidden"><div class="t" style="left:0;width:83px;text-align:center;top:11px;font-size:22px;line-height:22px;color:#111">10</div></div>
<div style="left:0px;top:463px;width:83px;height:2px;background:#c4c4c4"></div>
<div style="left:83px;top:463px;width:2856px;height:2px;background:#ced4e0"></div>
<div style="left:0px;top:422px;width:83px;height:42px;overflow:hidden"><div class="t" style="left:0;width:83px;text-align:center;top:11px;font-size:22px;line-height:22px;color:#111">11</div></div>
<div style="left:0px;top:505px;width:83px;height:2px;background:#c4c4c4"></div>
<div style="left:83px;top:505px;width:2856px;height:2px;background:#ced4e0"></div>
<div style="left:0px;top:464px;width:83px;height:42px;overflow:hidden"><div class="t" style="left:0;width:83px;text-align:center;top:11px;font-size:22px;line-height:22px;color:#111">12</div></div>
<div style="left:0px;top:547px;width:83px;height:2px;background:#c4c4c4"></div>
<div style="left:83px;top:547px;width:2856px;height:2px;background:#ced4e0"></div>
<div style="left:0px;top:506px;width:83px;height:42px;overflow:hidden"><div class="t" style="left:0;width:83px;text-align:center;top:11px;font-size:22px;line-height:22px;color:#111">13</div></div>
<div style="left:0px;top:589px;width:83px;height:2px;background:#c4c4c4"></div>
<div style="left:83px;top:589px;width:2856px;height:2px;background:#ced4e0"></div>
<div style="left:0px;top:548px;width:83px;height:42px;overflow:hidden"><div class="t" style="left:0;width:83px;text-align:center;top:11px;font-size:22px;line-height:22px;color:#111">14</div></div>
<div style="left:0px;top:631px;width:83px;height:2px;background:#c4c4c4"></div>
<div style="left:83px;top:631px;width:2856px;height:2px;background:#ced4e0"></div>
<div style="left:0px;top:590px;width:83px;height:42px;overflow:hidden"><div class="t" style="left:0;width:83px;text-align:center;top:11px;font-size:22px;line-height:22px;color:#111">15</div></div>
<div style="left:0px;top:671px;width:83px;height:2px;background:#c4c4c4"></div>
<div style="left:83px;top:671px;width:2856px;height:2px;background:#ced4e0"></div>
<div style="left:0px;top:632px;width:83px;height:40px;overflow:hidden"><div class="t" style="left:0;width:83px;text-align:center;top:11px;font-size:22px;line-height:22px;color:#111">16</div></div>
<div style="left:0px;top:711px;width:83px;height:2px;background:#c4c4c4"></div>
<div style="left:83px;top:711px;width:2856px;height:2px;background:#ced4e0"></div>
<div style="left:0px;top:672px;width:83px;height:40px;overflow:hidden"><div class="t" style="left:0;width:83px;text-align:center;top:11px;font-size:22px;line-height:22px;color:#111">17</div></div>
<div style="left:0px;top:751px;width:83px;height:2px;background:#c4c4c4"></div>
<div style="left:83px;top:751px;width:2856px;height:2px;background:#ced4e0"></div>
<div style="left:0px;top:712px;width:83px;height:40px;overflow:hidden"><div class="t" style="left:0;width:83px;text-align:center;top:11px;font-size:22px;line-height:22px;color:#111">18</div></div>
<div style="left:0px;top:791px;width:83px;height:2px;background:#c4c4c4"></div>
<div style="left:83px;top:791px;width:2856px;height:2px;background:#ced4e0"></div>
<div style="left:0px;top:752px;width:83px;height:40px;overflow:hidden"><div class="t" style="left:0;width:83px;text-align:center;top:11px;font-size:22px;line-height:22px;color:#111">19</div></div>
<div style="left:0px;top:831px;width:83px;height:2px;background:#c4c4c4"></div>
<div style="left:83px;top:831px;width:2856px;height:2px;background:#ced4e0"></div>
<div style="left:0px;top:792px;width:83px;height:40px;overflow:hidden"><div class="t" style="left:0;width:83px;text-align:center;top:11px;font-size:22px;line-height:22px;color:#111">20</div></div>
<div style="left:0px;top:871px;width:83px;height:2px;background:#c4c4c4"></div>
<div style="left:83px;top:871px;width:2856px;height:2px;background:#ced4e0"></div>
<div style="left:0px;top:832px;width:83px;height:40px;overflow:hidden"><div class="t" style="left:0;width:83px;text-align:center;top:11px;font-size:22px;line-height:22px;color:#111">21</div></div>
<div style="left:0px;top:911px;width:83px;height:2px;background:#c4c4c4"></div>
<div style="left:83px;top:911px;width:2856px;height:2px;background:#ced4e0"></div>
<div style="left:0px;top:872px;width:83px;height:40px;overflow:hidden"><div class="t" style="left:0;width:83px;text-align:center;top:11px;font-size:22px;line-height:22px;color:#111">22</div></div>
<div style="left:0px;top:951px;width:83px;height:2px;background:#c4c4c4"></div>
<div style="left:83px;top:951px;width:2856px;height:2px;background:#ced4e0"></div>
<div style="left:0px;top:912px;width:83px;height:40px;overflow:hidden"><div class="t" style="left:0;width:83px;text-align:center;top:11px;font-size:22px;line-height:22px;color:#111">23</div></div>
<div style="left:0px;top:991px;width:83px;height:2px;background:#c4c4c4"></div>
<div style="left:83px;top:991px;width:2856px;height:2px;background:#ced4e0"></div>
<div style="left:0px;top:952px;width:83px;height:40px;overflow:hidden"><div class="t" style="left:0;width:83px;text-align:center;top:11px;font-size:22px;line-height:22px;color:#111">24</div></div>
<div style="left:0px;top:1031px;width:83px;height:2px;background:#c4c4c4"></div>
<div style="left:83px;top:1031px;width:2856px;height:2px;background:#ced4e0"></div>
<div style="left:0px;top:992px;width:83px;height:40px;overflow:hidden"><div class="t" style="left:0;width:83px;text-align:center;top:11px;font-size:22px;line-height:22px;color:#111">25</div></div>
<div style="left:0px;top:1071px;width:83px;height:2px;background:#c4c4c4"></div>
<div style="left:83px;top:1071px;width:2856px;height:2px;background:#ced4e0"></div>
<div style="left:0px;top:1032px;width:83px;height:40px;overflow:hidden"><div class="t" style="left:0;width:83px;text-align:center;top:11px;font-size:22px;line-height:22px;color:#111">26</div></div>
<div style="left:0px;top:1111px;width:83px;height:2px;background:#c4c4c4"></div>
<div style="left:83px;top:1111px;width:2856px;height:2px;background:#ced4e0"></div>
<div style="left:0px;top:1072px;width:83px;height:40px;overflow:hidden"><div class="t" style="left:0;width:83px;text-align:center;top:11px;font-size:22px;line-height:22px;color:#111">27</div></div>
<div style="left:0px;top:1151px;width:83px;height:2px;background:#c4c4c4"></div>
<div style="left:83px;top:1151px;width:2856px;height:2px;background:#ced4e0"></div>
<div style="left:0px;top:1112px;width:83px;height:40px;overflow:hidden"><div class="t" style="left:0;width:83px;text-align:center;top:11px;font-size:22px;line-height:22px;color:#111">28</div></div>
<div style="left:0px;top:1191px;width:83px;height:2px;background:#c4c4c4"></div>
<div style="left:83px;top:1191px;width:2856px;height:2px;background:#ced4e0"></div>
<div style="left:0px;top:1152px;width:83px;height:40px;overflow:hidden"><div class="t" style="left:0;width:83px;text-align:center;top:11px;font-size:22px;line-height:22px;color:#111">29</div></div>
<div style="left:0px;top:1231px;width:83px;height:2px;background:#c4c4c4"></div>
<div style="left:83px;top:1231px;width:2856px;height:2px;background:#ced4e0"></div>
<div style="left:0px;top:1192px;width:83px;height:40px;overflow:hidden"><div class="t" style="left:0;width:83px;text-align:center;top:11px;font-size:22px;line-height:22px;color:#111">30</div></div>
<div style="left:0px;top:1271px;width:83px;height:2px;background:#c4c4c4"></div>
<div style="left:83px;top:1271px;width:2856px;height:2px;background:#ced4e0"></div>
<div style="left:0px;top:1232px;width:83px;height:40px;overflow:hidden"><div class="t" style="left:0;width:83px;text-align:center;top:11px;font-size:22px;line-height:22px;color:#111">31</div></div>
<div style="left:0px;top:1311px;width:83px;height:2px;background:#c4c4c4"></div>
<div style="left:83px;top:1311px;width:2856px;height:2px;background:#ced4e0"></div>
<div style="left:0px;top:1272px;width:83px;height:40px;overflow:hidden"><div class="t" style="left:0;width:83px;text-align:center;top:11px;font-size:22px;line-height:22px;color:#111">32</div></div>
<div style="left:0px;top:1351px;width:83px;height:2px;background:#c4c4c4"></div>
<div style="left:83px;top:1351px;width:2856px;height:2px;background:#ced4e0"></div>
<div style="left:0px;top:1312px;width:83px;height:40px;overflow:hidden"><div class="t" style="left:0;width:83px;text-align:center;top:11px;font-size:22px;line-height:22px;color:#111">33</div></div>
<div style="left:0px;top:1391px;width:83px;height:2px;background:#c4c4c4"></div>
<div style="left:83px;top:1391px;width:2856px;height:2px;background:#ced4e0"></div>
<div style="left:0px;top:1352px;width:83px;height:40px;overflow:hidden"><div class="t" style="left:0;width:83px;text-align:center;top:11px;font-size:22px;line-height:22px;color:#111">34</div></div>
<div style="left:0px;top:1431px;width:83px;height:2px;background:#c4c4c4"></div>
<div style="left:83px;top:1431px;width:2856px;height:2px;background:#ced4e0"></div>
<div style="left:0px;top:1392px;width:83px;height:40px;overflow:hidden"><div class="t" style="left:0;width:83px;text-align:center;top:11px;font-size:22px;line-height:22px;color:#111">35</div></div>
</div>
<div style="left:913px;top:381px;width:264px;height:41px;border:2px solid #3a78c2;border-top:none"></div>
<div style="left:790px;top:802px;width:84px;height:44px;border:2px solid #3a78c2;border-left:none"></div>
<div class="t" style="left:919.3px;top:476px;font-size:33px;line-height:33px;color:#1b1f35;-webkit-text-stroke:0.3px #1b1f35;letter-spacing:-0.38px;">Sales</div>
<div class="t" style="left:918.0px;top:534px;font-size:27px;line-height:27px;color:#1b1f35;-webkit-text-stroke:0.3px #1b1f35;letter-spacing:0.31px;">Jan · 2018 · Actual · Units</div>
<div class="t" style="left:918.8px;top:613px;font-size:24px;line-height:24px;color:#b8bec8;-webkit-text-stroke:0.3px #b8bec8;letter-spacing:1.55px;">localhost/Demo</div>
<div class="t" style="left:1231.6px;top:613px;font-size:24px;line-height:24px;color:#5a6270;-webkit-text-stroke:0.3px #5a6270;letter-spacing:1.78px;">Months</div>
<div class="t" style="left:1442.0px;top:613px;font-size:24px;line-height:24px;color:#5a6270;-webkit-text-stroke:0.3px #5a6270;letter-spacing:0.80px;">Year</div>
<div class="t" style="left:918.8px;top:674px;font-size:24px;line-height:24px;color:#b8bec8;-webkit-text-stroke:0.3px #b8bec8;letter-spacing:-0.56px;">Sales</div>
<div class="t" style="left:1256.4px;top:674px;font-size:24px;line-height:24px;color:#1b1f35;-webkit-text-stroke:0.3px #1b1f35;letter-spacing:-1.04px;">Jan</div>
<div class="t" style="left:1443.5px;top:674px;font-size:24px;line-height:24px;color:#1b1f35;-webkit-text-stroke:0.3px #1b1f35;letter-spacing:0.80px;">2018</div>
<div style="left:1176px;top:660px;width:198px;height:42px;border:2px solid #8a95a5"></div>
<div style="left:1372px;top:660px;width:200px;height:42px;border:2px solid #8a95a5"></div>
<div class="t" style="left:1281.6px;top:753px;font-size:25px;line-height:25px;color:#1b1f35;font-weight:bold;letter-spacing:-0.06px;">Europe</div>
<div style="left:913px;top:782px;width:660px;height:4px;background:#000"></div>
<div class="t" style="left:918.8px;top:814px;font-size:25px;line-height:25px;color:#1b1f35;font-weight:bold;letter-spacing:0.27px;">All Products</div>
<div class="t" style="left:1257.6px;top:814px;font-size:25px;line-height:25px;color:#1b1f35;-webkit-text-stroke:0.3px #1b1f35;letter-spacing:-0.24px;">1,252,352</div>
<div class="t" style="left:945.4px;top:856px;font-size:25px;line-height:25px;color:#1b1f35;font-weight:bold;letter-spacing:0.24px;">Stationary PCs</div>
<div class="t" style="left:1275.8px;top:856px;font-size:25px;line-height:25px;color:#1b1f35;-webkit-text-stroke:0.3px #1b1f35;letter-spacing:0.12px;">420,968</div>
<div class="t" style="left:945.4px;top:898px;font-size:25px;line-height:25px;color:#1b1f35;font-weight:bold;letter-spacing:0.20px;">Portable PCs</div>
<div class="t" style="left:1276.7px;top:898px;font-size:25px;line-height:25px;color:#1b1f35;-webkit-text-stroke:0.3px #1b1f35;letter-spacing:-0.03px;">380,592</div>
<div class="t" style="left:945.4px;top:940px;font-size:25px;line-height:25px;color:#1b1f35;font-weight:bold;letter-spacing:1.15px;">Monitors</div>
<div class="t" style="left:1275.8px;top:940px;font-size:25px;line-height:25px;color:#1b1f35;-webkit-text-stroke:0.3px #1b1f35;letter-spacing:0.12px;">409,965</div>
<div class="t" style="left:945.4px;top:982.5px;font-size:25px;line-height:25px;color:#1b1f35;font-weight:bold;letter-spacing:0.24px;">Peripherals</div>
<div class="t" style="left:1290.3px;top:982.5px;font-size:25px;line-height:25px;color:#1b1f35;-webkit-text-stroke:0.3px #1b1f35;letter-spacing:0.03px;">40,827</div>
<div class="t" style="left:1474.2px;top:814px;font-size:25px;line-height:25px;color:#1b1f35;-webkit-text-stroke:0.3px #1b1f35;letter-spacing:0.55px;">628,113</div>
<div class="t" style="left:1472.3px;top:856px;font-size:25px;line-height:25px;color:#1b1f35;-webkit-text-stroke:0.3px #1b1f35;letter-spacing:0.55px;">137,286</div>
<div class="t" style="left:1472.3px;top:898px;font-size:25px;line-height:25px;color:#1b1f35;-webkit-text-stroke:0.3px #1b1f35;letter-spacing:0.55px;">136,074</div>
<div class="t" style="left:1472.3px;top:940px;font-size:25px;line-height:25px;color:#1b1f35;-webkit-text-stroke:0.3px #1b1f35;letter-spacing:0.55px;">213,998</div>
<div class="t" style="left:1486.8px;top:982.5px;font-size:25px;line-height:25px;color:#1b1f35;-webkit-text-stroke:0.3px #1b1f35;letter-spacing:0.55px;">95,476</div>
<div style="left:910px;top:800px;width:270px;height:48px;border:5px solid #5b94d6"></div>
<div style="left:1171px;top:839px;width:11px;height:11px;background:#5b94d6"></div>
<div style="left:3729px;top:381px;width:31px;height:1417px;background:#f4f4f4"></div>
<div style="left:3731px;top:384px;width:28px;height:29px;border:2px solid #d0d0d0;background:#fafafa"></div>
<svg style="position:absolute;left:3737px;top:392px;" width="16" height="12" viewBox="0 0 16 12"><path d="M2,9 L8,3 L14,9" fill="none" stroke="#b0b0b0" stroke-width="2"/></svg>
<div style="left:3731px;top:418px;width:28px;height:1290px;border:2px solid #cacaca;background:#f0f0f0;border-radius:2px"></div>
<svg style="position:absolute;left:3737px;top:1056px;" width="16" height="14" viewBox="0 0 16 14"><path d="M2,2 L5,5 L8,2 L11,5 L14,2 M2,7 L5,10 L8,7 L11,10 L14,7 M2,12 L5,15 L8,12 L11,15 L14,12" fill="none" stroke="#9a9a9a" stroke-width="1.3"/></svg>
<div style="left:3731px;top:1766px;width:28px;height:29px;border:2px solid #d0d0d0;background:#fafafa"></div>
<svg style="position:absolute;left:3737px;top:1775px;" width="16" height="12" viewBox="0 0 16 12"><path d="M2,3 L8,9 L14,3" fill="none" stroke="#b0b0b0" stroke-width="2"/></svg>
<div style="left:790px;top:1798px;width:2970px;height:37px;background:#f8f8f8"></div>
<div style="left:790px;top:1797px;width:2970px;height:2px;background:#d3d9e0"></div>
<div style="left:790px;top:1834px;width:2970px;height:2px;background:#d3d9e0"></div>
<svg style="position:absolute;left:804px;top:1811px;" width="16" height="15" viewBox="0 0 16 15"><path d="M2.5,1 V14 M13,1.5 L7,7.5 L13,13.5" fill="none" stroke="#262d38" stroke-width="2.6"/></svg>
<svg style="position:absolute;left:846px;top:1811px;" width="12" height="15" viewBox="0 0 12 15"><path d="M9,1.5 L3,7.5 L9,13.5" fill="none" stroke="#262d38" stroke-width="2.6"/></svg>
<svg style="position:absolute;left:886px;top:1811px;" width="12" height="15" viewBox="0 0 12 15"><path d="M3,1.5 L9,7.5 L3,13.5" fill="none" stroke="#262d38" stroke-width="2.6"/></svg>
<svg style="position:absolute;left:924px;top:1811px;" width="16" height="15" viewBox="0 0 16 15"><path d="M13.5,1 V14 M3,1.5 L9,7.5 L3,13.5" fill="none" stroke="#262d38" stroke-width="2.6"/></svg>
<div style="left:950px;top:1799px;width:89px;height:35px;background:#5a95d5"></div>
<div class="t" style="left:958.7px;top:1807px;font-size:24px;line-height:24px;color:#f0f6fc;-webkit-text-stroke:0.3px #f0f6fc;letter-spacing:-1.65px;">Sheet1</div>
<svg style="position:absolute;left:1057px;top:1803px;" width="30" height="26" viewBox="0 0 30 26"><rect x="1.5" y="1.5" width="27" height="23" fill="none" stroke="#262d38" stroke-width="2.4"/><path d="M2,8 H12 V2" fill="none" stroke="#262d38" stroke-width="2"/></svg>
<div style="left:1104px;top:1799px;width:2px;height:35px;background:#dde1e6"></div>
<div style="left:2558px;top:1800px;width:30px;height:29px;border:2px solid #d0d0d0;background:#fafafa"></div>
<svg style="position:absolute;left:2565px;top:1807px;" width="14" height="16" viewBox="0 0 14 16"><path d="M10,2 L4,8 L10,14" fill="none" stroke="#a0a0a0" stroke-width="2"/></svg>
<div style="left:2592px;top:1800px;width:1014px;height:29px;border:2px solid #c8c8c8;background:#eeeeee;border-radius:2px"></div>
<svg style="position:absolute;left:3095px;top:1806px;" width="14" height="16" viewBox="0 0 14 16"><path d="M2,2 L5,5 L2,8 L5,11 L2,14 M7,2 L10,5 L7,8 L10,11 L7,14 M12,2 L15,5 L12,8 L15,11 L12,14" fill="none" stroke="#9a9a9a" stroke-width="1.3"/></svg>
<div style="left:3698px;top:1800px;width:30px;height:29px;border:2px solid #d0d0d0;background:#fafafa"></div>
<svg style="position:absolute;left:3706px;top:1807px;" width="14" height="16" viewBox="0 0 14 16"><path d="M4,2 L10,8 L4,14" fill="none" stroke="#a0a0a0" stroke-width="2"/></svg>
<div style="left:3244px;top:1840px;width:2px;height:29px;background:#dde1e6"></div>
<div style="left:3490px;top:1840px;width:2px;height:29px;background:#dde1e6"></div>
<div class="t" style="left:3284.5px;top:1842px;font-size:24px;line-height:24px;color:#3a4452;-webkit-text-stroke:0.3px #3a4452;letter-spacing:-0.94px;">Status:</div>
<div class="t" style="left:3384.4px;top:1842px;font-size:24px;line-height:24px;color:#2f6dbd;-webkit-text-stroke:0.3px #2f6dbd;letter-spacing:-1.12px;">Ready</div>
<div class="t" style="left:3529.8px;top:1842px;font-size:24px;line-height:24px;color:#3a4452;-webkit-text-stroke:0.3px #3a4452;letter-spacing:-0.70px;">Mode:</div>
<div class="t" style="left:3624.5px;top:1842px;font-size:24px;line-height:24px;color:#2f6dbd;-webkit-text-stroke:0.3px #2f6dbd;letter-spacing:-0.36px;">Designer</div>
<div style="left:1476px;top:270px;width:1600px;height:1480px;background:#f4f5f8;box-shadow:0 4px 50px rgba(0,0,0,0.3)"></div>
<div class="t" style="left:1509.0px;top:294px;font-size:27px;line-height:27px;color:#262d38;-webkit-text-stroke:0.3px #262d38;letter-spacing:-1.17px;">PASTE VIEW</div>
<svg style="position:absolute;left:3025px;top:295px;" width="22" height="22" viewBox="0 0 22 22"><path d="M2,2 L20,20 M20,2 L2,20" stroke="#4a525e" stroke-width="2.2"/></svg>
<div style="left:1476px;top:340px;width:1600px;height:2px;background:#dde2e8"></div>
<div style="left:1476px;top:342px;width:1600px;height:73px;background:#fff"></div>
<div style="left:1476px;top:414px;width:1600px;height:2px;background:#dde2e8"></div>
<div style="left:1496px;top:354px;width:150px;height:48px;background:#eaf4fd;border-radius:6px"></div>
<div class="t" style="left:1515.3px;top:367px;font-size:24px;line-height:24px;color:#2f6dbd;-webkit-text-stroke:0.65px #2f6dbd;letter-spacing:1.34px;">Definition</div>
<div class="t" style="left:1675.7px;top:367px;font-size:24px;line-height:24px;color:#262d38;-webkit-text-stroke:0.65px #262d38;letter-spacing:0.95px;">Options</div>
<div style="left:1506px;top:444px;width:672px;height:47px;border:2px solid #c5ccd3;background:#fff"></div>
<div class="t" style="left:1520.7px;top:459px;font-size:24px;line-height:24px;color:#8b9199;-webkit-text-stroke:0.3px #8b9199;letter-spacing:-0.01px;">Select view</div>
<svg style="position:absolute;left:2145px;top:464px;" width="16" height="11" viewBox="0 0 16 11"><path d="M2,2 L8.0,7.64 L14,2" fill="none" stroke="#262d38" stroke-width="2.6"/></svg>
<svg style="position:absolute;left:2195px;top:450px;" width="34" height="34" viewBox="0 0 34 34"><circle cx="17" cy="17" r="15" fill="none" stroke="#262d38" stroke-width="2"/><path d="M10,17.5 L15,22.5 L24,12" fill="none" stroke="#262d38" stroke-width="2.2"/></svg>
<div style="left:2236px;top:452px;width:2px;height:40px;background:#dde1e6"></div>
<svg style="position:absolute;left:2247px;top:465px;" width="15" height="11" viewBox="0 0 15 11"><path d="M2,2 L7.5,7.17 L13,2" fill="none" stroke="#262d38" stroke-width="2.4"/></svg>
<svg style="position:absolute;left:2300px;top:452px;" width="32" height="32" viewBox="0 0 32 32"><path d="M3,30 L3,24 L21,6 L27,12 L9,30 Z M18,9 L24,15 M21,6 L23,3.5 L29.5,10 L27,12" fill="none" stroke="#80868e" stroke-width="2" stroke-linejoin="round"/></svg>
<svg style="position:absolute;left:2358px;top:451px;" width="32" height="34" viewBox="0 0 32 34"><g fill="none" stroke="#80868e" stroke-width="2"><path d="M2,6 H30 M10,6 V2 H22 V6 M5,6 L8,34 H24 L27,6 M12,10 L13,32 M16,10 V32 M20,10 L19,32"/></g></svg>
<svg style="position:absolute;left:2418px;top:452px;" width="28" height="34" viewBox="0 0 28 34"><g fill="none" stroke="#80868e" stroke-width="2"><path d="M2,34 V10 L14,2 L26,10 V34 M9,34 V18 H19 V34"/></g></svg>
<div style="left:1506px;top:522px;width:1550px;height:2px;background:#d8dde3"></div>
<div class="t" style="left:1507.1px;top:546.5px;font-size:24px;line-height:24px;color:#262d38;-webkit-text-stroke:0.65px #262d38;letter-spacing:0.78px;">Select server/database</div>
<div style="left:1506px;top:581px;width:700px;height:47px;border:2px solid #c5ccd3;background:#fff"></div>
<div class="t" style="left:1520.7px;top:594px;font-size:24px;line-height:24px;color:#262d38;-webkit-text-stroke:0.3px #262d38;letter-spacing:0.62px;">Demo</div>
<div style="left:2300px;top:581px;width:660px;height:47px;border:2px solid #c5ccd3;background:#fff"></div>
<svg style="position:absolute;left:2928px;top:596px;" width="16" height="11" viewBox="0 0 16 11"><path d="M2,2 L8.0,7.64 L14,2" fill="none" stroke="#262d38" stroke-width="2.6"/></svg>
<svg style="position:absolute;left:2977px;top:586px;" width="32" height="34" viewBox="0 0 32 34"><g fill="none" stroke="#262d38" stroke-width="2" stroke-linejoin="round"><path d="M16,1.5 L30,8 V25 L16,31.5 L2,25 V8 Z M16,1.5 V19 L2,24.5 M16,19 L30,24.5"/></g></svg>
<svg style="position:absolute;left:3024px;top:600px;" width="14" height="10" viewBox="0 0 14 10"><path d="M2,2 L7.0,6.699999999999999 L12,2" fill="none" stroke="#3a4452" stroke-width="2.4"/></svg>
<div style="left:1506px;top:648px;width:1550px;height:2px;background:#d8dde3"></div>
<div class="t" style="left:1506.8px;top:695px;font-size:24px;line-height:24px;color:#262d38;-webkit-text-stroke:0.65px #262d38;letter-spacing:0.25px;">Source</div>
<svg style="position:absolute;left:1507px;top:738px;" width="495" height="908" viewBox="0 0 495 908"><rect x="1" y="1" width="493" height="906" rx="10" fill="none" stroke="#5c636c" stroke-width="2.2" stroke-dasharray="5.5 5"/></svg>
<svg style="position:absolute;left:2042px;top:738px;" width="484" height="908" viewBox="0 0 484 908"><rect x="1" y="1" width="482" height="906" rx="10" fill="none" stroke="#5c636c" stroke-width="2.2" stroke-dasharray="5.5 5"/></svg>
<svg style="position:absolute;left:2565px;top:738px;" width="481" height="342" viewBox="0 0 481 342"><rect x="1" y="1" width="479" height="340" rx="10" fill="none" stroke="#5c636c" stroke-width="2.2" stroke-dasharray="5.5 5"/></svg>
<svg style="position:absolute;left:2565px;top:1158px;" width="481" height="488" viewBox="0 0 481 488"><rect x="1" y="1" width="479" height="486" rx="10" fill="none" stroke="#5c636c" stroke-width="2.2" stroke-dasharray="5.5 5"/></svg>
<div style="left:2583px;top:756px;width:445px;height:47px;background:#fff"></div>
<svg style="position:absolute;left:2986px;top:768px;" width="30" height="28" viewBox="0 0 30 28"><rect x="1" y="1" width="28" height="26" rx="2" fill="none" stroke="#2f6dbd" stroke-width="2.2"/><rect x="1" y="1" width="28" height="6" fill="#2f6dbd"/><rect x="10" y="12" width="10" height="8" fill="#2f6dbd"/></svg>
<div style="left:2583px;top:815px;width:445px;height:47px;background:#ebf6fb"></div>
<svg style="position:absolute;left:2986px;top:827px;" width="30" height="28" viewBox="0 0 30 28"><rect x="1" y="1" width="28" height="26" rx="2" fill="none" stroke="#2f6dbd" stroke-width="2.2"/><rect x="1" y="1" width="28" height="6" fill="#2f6dbd"/><rect x="10" y="12" width="10" height="8" fill="#2f6dbd"/></svg>
<div style="left:2583px;top:872px;width:445px;height:47px;background:#fff"></div>
<svg style="position:absolute;left:2986px;top:884px;" width="30" height="28" viewBox="0 0 30 28"><rect x="1" y="1" width="28" height="26" rx="2" fill="none" stroke="#2f6dbd" stroke-width="2.2"/><rect x="1" y="1" width="28" height="6" fill="#2f6dbd"/><rect x="10" y="12" width="10" height="8" fill="#2f6dbd"/></svg>
<div style="left:2583px;top:930px;width:445px;height:47px;background:#fff"></div>
<svg style="position:absolute;left:2986px;top:942px;" width="30" height="28" viewBox="0 0 30 28"><rect x="1" y="1" width="28" height="26" rx="2" fill="none" stroke="#2f6dbd" stroke-width="2.2"/><rect x="1" y="1" width="28" height="6" fill="#2f6dbd"/><rect x="10" y="12" width="10" height="8" fill="#2f6dbd"/></svg>
<div style="left:2583px;top:1176px;width:445px;height:47px;background:#fff"></div>
<svg style="position:absolute;left:2986px;top:1188px;" width="30" height="28" viewBox="0 0 30 28"><rect x="1" y="1" width="28" height="26" rx="2" fill="none" stroke="#2f6dbd" stroke-width="2.2"/><rect x="1" y="1" width="28" height="6" fill="#2f6dbd"/><rect x="10" y="12" width="10" height="8" fill="#2f6dbd"/></svg>
<svg style="position:absolute;left:3005px;top:1107px;" width="34" height="34" viewBox="0 0 34 34"><circle cx="4" cy="4" r="3" fill="#262d38"/><rect x="1.5" y="10" width="5" height="22" rx="2.5" fill="none" stroke="#262d38" stroke-width="2.2"/><rect x="10" y="1.5" width="22" height="5" rx="2.5" fill="none" stroke="#262d38" stroke-width="2.2"/><path d="M11,27 C20,26 27,20 29,11" fill="none" stroke="#262d38" stroke-width="2"/><path d="M26,13 L29.5,9 L32,14 M14,24 L10,27 L14,30" fill="none" stroke="#262d38" stroke-width="2"/></svg>
<div style="left:1476px;top:1675px;width:1600px;height:2px;background:#d8dde3"></div>
<div style="left:1500px;top:1690px;width:180px;height:48px;border:2px solid #dde1e6;background:#fff;border-radius:6px"></div>
<div class="t" style="left:1531.0px;top:1703px;font-size:24px;line-height:24px;color:#262d38;-webkit-text-stroke:0.3px #262d38;letter-spacing:0.96px;">Show now</div>
<div style="left:1704px;top:1690px;width:99px;height:48px;border:2px solid #dde1e6;background:#fff;border-radius:6px"></div>
<svg style="position:absolute;left:1714px;top:1696px;" width="32" height="36" viewBox="0 0 32 36"><ellipse cx="16" cy="18" rx="10" ry="13" fill="none" stroke="#262d38" stroke-width="2.2"/><path d="M2,33 L30,3" stroke="#262d38" stroke-width="2.2"/></svg>
<div style="left:1758px;top:1700px;width:2px;height:28px;background:#d3d8de"></div>
<svg style="position:absolute;left:1769px;top:1708px;" width="15" height="11" viewBox="0 0 15 11"><path d="M2,2 L7.5,7.17 L13,2" fill="none" stroke="#262d38" stroke-width="2.4"/></svg>
<div style="left:2628px;top:1690px;width:200px;height:48px;background:#2f6fc3;border-radius:6px"></div>
<div class="t" style="left:2697.8px;top:1704px;font-size:24px;line-height:24px;color:#fff;-webkit-text-stroke:0.65px #fff;letter-spacing:-0.12px;">Paste</div>
<div style="left:2853px;top:1690px;width:198px;height:48px;border:2px solid #dde1e6;background:#fff;border-radius:6px"></div>
<div class="t" style="left:2922.0px;top:1704px;font-size:24px;line-height:24px;color:#262d38;-webkit-text-stroke:0.3px #262d38;letter-spacing:-0.34px;">Close</div>
<div style="left:790px;top:146px;width:2970px;height:1723px;background:rgba(0,0,0,0.2)"></div>
<div style="left:1786px;top:480px;width:980px;height:1060px;background:#f4f4f7;box-shadow:0 8px 64px rgba(0,0,0,0.27)"></div>
<div class="t" style="left:1819.0px;top:503px;font-size:28px;line-height:28px;color:#262d38;-webkit-text-stroke:0.3px #262d38;letter-spacing:-2.08px;">SELECT ELEMENTS</div>
<svg style="position:absolute;left:2715px;top:505px;" width="22" height="22" viewBox="0 0 22 22"><path d="M2,2 L20,20 M20,2 L2,20" stroke="#4a525e" stroke-width="2.2"/></svg>
<div style="left:1786px;top:549px;width:980px;height:2px;background:#e1e5ea"></div>
<svg style="position:absolute;left:1790px;top:555px;" width="200" height="60" viewBox="0 0 200 60"><g fill="none" stroke="#1f2530" stroke-width="1.8"><path d="M24.5,32 H16 a2,2 0 0 1 -2,-2 V17 a2,2 0 0 1 2,-2 H29.5 a2,2 0 0 1 2,2 V26.8"/><path d="M22.9,32 V38 H28.3"/><rect x="28.3" y="29.3" width="17.4" height="17.3" rx="2"/><path d="M18.2,23.9 H28 M22.9,19.3 V28.7 M32.2,38 H41.9 M36.9,33.2 V42.7"/><path d="M72.5,32 H64 a2,2 0 0 1 -2,-2 V17 a2,2 0 0 1 2,-2 H77.5 a2,2 0 0 1 2,2 V26.8"/><path d="M70.9,32 V38 H76.3"/><rect x="76.3" y="29.3" width="17.4" height="17.3" rx="2"/><path d="M66.2,23.9 H76 M80.2,38 H89.9"/><path d="M114.6,19.8 H123.8 M114.6,19.8 V28.7 M114.6,19.8 L124.6,29.3"/><path d="M137.4,42.3 H128.1 M137.4,42.3 V33.2 M127.3,32.5 L137.4,42.3"/><path d="M162.3,19.4 L172.7,29.9 M172.7,29.9 V20.6 M172.7,29.9 H163.8"/><path d="M175.9,33.4 L186.3,43.3 M175.9,33.4 H185.2 M175.9,33.4 V42.3"/></g></svg>
<div class="t" style="left:2140.7px;top:575px;font-size:24px;line-height:24px;color:#3a4452;-webkit-text-stroke:0.65px #3a4452;letter-spacing:0.40px;">Subset</div>
<div style="left:2236px;top:562px;width:462px;height:47px;border:2px solid #c5ccd3;background:#fff"></div>
<div class="t" style="left:2250.9px;top:578px;font-size:24px;line-height:24px;color:#262d38;-webkit-text-stroke:0.3px #262d38;letter-spacing:0.84px;">[None]</div>
<svg style="position:absolute;left:2665px;top:581px;" width="16" height="11" viewBox="0 0 16 11"><path d="M2,2 L8.0,7.64 L14,2" fill="none" stroke="#262d38" stroke-width="2.6"/></svg>
<svg style="position:absolute;left:2715px;top:569px;" width="34" height="34" viewBox="0 0 34 34"><circle cx="17" cy="17" r="15.5" fill="none" stroke="#262d38" stroke-width="2"/><path d="M17,9 V25 M9,17 H25" stroke="#262d38" stroke-width="2.2"/></svg>
<div style="left:1786px;top:620px;width:980px;height:2px;background:#e1e5ea"></div>
<div style="left:1787px;top:622px;width:978px;height:452px;background:#fff"></div>
<div style="left:1787px;top:766px;width:978px;height:144px;background:#ebf3fa"></div>
<svg style="position:absolute;left:1809px;top:641px;" width="18" height="12" viewBox="0 0 18 12"><path d="M2,2 L9.0,8.58 L16,2" fill="none" stroke="#262d38" stroke-width="2.8"/></svg>
<div class="t" style="left:1848.0px;top:636px;font-size:24px;line-height:24px;color:#262d38;-webkit-text-stroke:0.3px #262d38;letter-spacing:0.02px;">All Years</div>
<div class="t" style="left:1888.0px;top:683px;font-size:25px;line-height:25px;color:#262d38;-webkit-text-stroke:0.3px #262d38;letter-spacing:-0.54px;">2014</div>
<div class="t" style="left:1888.0px;top:731px;font-size:25px;line-height:25px;color:#262d38;-webkit-text-stroke:0.3px #262d38;letter-spacing:-0.54px;">2015</div>
<div class="t" style="left:1888.0px;top:779px;font-size:25px;line-height:25px;color:#262d38;-webkit-text-stroke:0.3px #262d38;letter-spacing:-0.54px;">2016</div>
<div class="t" style="left:1888.0px;top:827px;font-size:25px;line-height:25px;color:#262d38;-webkit-text-stroke:0.3px #262d38;letter-spacing:-0.54px;">2017</div>
<div class="t" style="left:1888.0px;top:875px;font-size:25px;line-height:25px;color:#262d38;-webkit-text-stroke:0.3px #262d38;letter-spacing:-0.54px;">2018</div>
<div class="t" style="left:1888.0px;top:923px;font-size:25px;line-height:25px;color:#262d38;-webkit-text-stroke:0.3px #262d38;letter-spacing:-0.54px;">2019</div>
<div class="t" style="left:1888.0px;top:971px;font-size:25px;line-height:25px;color:#262d38;-webkit-text-stroke:0.3px #262d38;letter-spacing:-0.54px;">2020</div>
<div class="t" style="left:1888.0px;top:1019px;font-size:25px;line-height:25px;color:#262d38;-webkit-text-stroke:0.3px #262d38;letter-spacing:-0.54px;">2021</div>
<div style="left:1786px;top:1073px;width:980px;height:2px;background:#e1e5ea"></div>
<div class="t" style="left:1868.8px;top:1105.5px;font-size:24px;line-height:24px;color:#3a4452;-webkit-text-stroke:0.3px #3a4452;letter-spacing:0.90px;">Variable</div>
<div style="left:1986px;top:1102px;width:32px;height:32px;border:2px solid #5a6270;background:#fff"></div>
<div class="t" style="left:2027.0px;top:1106.5px;font-size:24px;line-height:24px;color:#3a4452;-webkit-text-stroke:0.3px #3a4452;letter-spacing:0.79px;">Use this variable</div>
<div style="left:2241px;top:1093px;width:440px;height:46px;border:2px solid #e6e9ed;background:#f4f4f7"></div>
<div style="left:2703px;top:1093px;width:46px;height:46px;border:2px solid #e6e9ed;background:#f4f4f7;border-radius:6px"></div>
<svg style="position:absolute;left:2700px;top:1095px;" width="50" height="42" viewBox="0 0 50 42"><path d="M16,7.5 H11.2 V34.8 H16 M35,7.5 H39.8 V34.8 H35" fill="none" stroke="#8b9199" stroke-width="2.4"/><text x="25.5" y="28" text-anchor="middle" font-family="Liberation Serif" font-style="italic" font-weight="bold" font-size="25" fill="#8b9199">x</text></svg>
<div style="left:1802px;top:1156px;width:948px;height:2px;background:#e1e5ea"></div>
<div class="t" style="left:1905.4px;top:1182px;font-size:24px;line-height:24px;color:#3a4452;-webkit-text-stroke:0.3px #3a4452;letter-spacing:0.90px;">Alias</div>
<div style="left:1986px;top:1171px;width:308px;height:46px;border:2px solid #c5ccd3;background:#fff"></div>
<div class="t" style="left:2001.4px;top:1184.6px;font-size:24px;line-height:24px;color:#262d38;-webkit-text-stroke:0.3px #262d38;letter-spacing:0.70px;">[None]</div>
<svg style="position:absolute;left:2262px;top:1191px;" width="16" height="11" viewBox="0 0 16 11"><path d="M2,2 L8.0,7.64 L14,2" fill="none" stroke="#262d38" stroke-width="2.6"/></svg>
<div style="left:2307px;top:1171px;width:394px;height:46px;border:2px solid #c5ccd3;background:#fff"></div>
<svg style="position:absolute;left:2710px;top:1178px;" width="32" height="32" viewBox="0 0 32 32"><circle cx="13" cy="13" r="10.5" fill="none" stroke="#262d38" stroke-width="2.2"/><path d="M20.5,20.5 L29,29" stroke="#262d38" stroke-width="2.4"/></svg>
<div class="t" style="left:1824.4px;top:1241px;font-size:24px;line-height:24px;color:#b9bec6;-webkit-text-stroke:0.3px #b9bec6;letter-spacing:0.90px;">Alias format</div>
<div style="left:1986px;top:1229px;width:308px;height:46px;border:2px solid #e6e9ed;background:#f4f4f7"></div>
<div class="t" style="left:2001.0px;top:1242.7px;font-size:24px;line-height:24px;color:#b9bec6;-webkit-text-stroke:0.3px #b9bec6;letter-spacing:0.90px;">Alias</div>
<svg style="position:absolute;left:2262px;top:1250px;" width="16" height="11" viewBox="0 0 16 11"><path d="M2,2 L8.0,7.64 L14,2" fill="none" stroke="#c0c4ca" stroke-width="2.6"/></svg>
<div style="left:2306px;top:1224px;width:46px;height:48px;border:2px solid #e3e6ea;background:#fff;border-radius:7px"></div>
<div class="t" style="left:2322.3px;top:1237px;font-size:24px;line-height:24px;color:#262d38;-webkit-text-stroke:0.3px #262d38;">1</div>
<div style="left:2356px;top:1224px;width:46px;height:48px;border:2px solid #e3e6ea;background:#fff;border-radius:7px"></div>
<div class="t" style="left:2372.3px;top:1237px;font-size:24px;line-height:24px;color:#262d38;-webkit-text-stroke:0.3px #262d38;">2</div>
<div style="left:2406px;top:1224px;width:46px;height:48px;border:2px solid #e3e6ea;background:#fff;border-radius:7px"></div>
<div class="t" style="left:2422.3px;top:1237px;font-size:24px;line-height:24px;color:#262d38;-webkit-text-stroke:0.3px #262d38;">3</div>
<div style="left:2456px;top:1224px;width:46px;height:48px;border:2px solid #e3e6ea;background:#fff;border-radius:7px"></div>
<div class="t" style="left:2472.3px;top:1237px;font-size:24px;line-height:24px;color:#262d38;-webkit-text-stroke:0.3px #262d38;">4</div>
<div style="left:2506px;top:1224px;width:46px;height:48px;border:2px solid #e3e6ea;background:#fff;border-radius:7px"></div>
<div class="t" style="left:2522.3px;top:1237px;font-size:24px;line-height:24px;color:#262d38;-webkit-text-stroke:0.3px #262d38;">5</div>
<div style="left:2556px;top:1224px;width:48px;height:48px;border:2px solid #e3e6ea;background:#fff;border-radius:7px"></div>
<div class="t" style="left:2572.0px;top:1237px;font-size:24px;line-height:24px;color:#262d38;-webkit-text-stroke:0.3px #262d38;">B</div>
<svg style="position:absolute;left:2615px;top:1231px;" width="32" height="32" viewBox="0 0 32 32"><g fill="#262d38"><rect x="1" y="1" width="30" height="5" rx="2.5"/><rect x="7" y="9.5" width="24" height="5" rx="2.5"/><rect x="7" y="18" width="24" height="5" rx="2.5"/><rect x="7" y="26.5" width="24" height="5" rx="2.5"/></g><path d="M4,5 V29 H8 M4,12 H8 M4,20.5 H8" fill="none" stroke="#262d38" stroke-width="2"/></svg>
<svg style="position:absolute;left:2663px;top:1231px;" width="32" height="32" viewBox="0 0 32 32"><g fill="none" stroke="#262d38" stroke-width="2"><rect x="1" y="1.5" width="30" height="4.5" rx="2"/><rect x="9" y="10" width="22" height="4.5" rx="2"/><rect x="9" y="18.5" width="22" height="4.5" rx="2"/><rect x="9" y="27" width="22" height="4.5" rx="2"/><path d="M4,6 V29 H9 M4,12 H9 M4,20.5 H9"/></g></svg>
<svg style="position:absolute;left:2710px;top:1232px;" width="36" height="32" viewBox="0 0 36 32"><g fill="none" stroke="#262d38" stroke-width="2.4"><rect x="2.5" y="2.5" width="10.5" height="10.5" rx="2"/><rect x="22.5" y="2.5" width="10.5" height="10.5" rx="2"/><rect x="22.5" y="18.5" width="10.5" height="10.5" rx="2"/><path d="M13,7.5 C17,7.5 18.5,10 18.5,14 C18.5,19 19.5,22 22.5,24"/></g></svg>
<div class="t" style="left:1862.7px;top:1298.7px;font-size:24px;line-height:24px;color:#3a4452;-webkit-text-stroke:0.3px #3a4452;letter-spacing:0.90px;">Function</div>
<div class="t" style="left:1876.9px;top:1356.5px;font-size:24px;line-height:24px;color:#3a4452;-webkit-text-stroke:0.3px #3a4452;letter-spacing:0.90px;">Display</div>
<div style="left:1986px;top:1288px;width:308px;height:46px;border:2px solid #2f6dbd;background:#fff"></div>
<div class="t" style="left:2000.6px;top:1301px;font-size:24px;line-height:24px;color:#262d38;-webkit-text-stroke:0.3px #262d38;letter-spacing:-0.27px;">Sum</div>
<svg style="position:absolute;left:2262px;top:1306px;" width="16" height="11" viewBox="0 0 16 11"><path d="M2,2 L8.0,7.64 L14,2" fill="none" stroke="#262d38" stroke-width="2.6"/></svg>
<div class="t" style="left:2564.3px;top:1424px;font-size:17px;line-height:17px;color:#262d38;-webkit-text-stroke:0.65px #262d38;">A-Z</div>
<svg style="position:absolute;left:2609px;top:1429px;" width="15" height="11" viewBox="0 0 15 11"><path d="M2,2 L7.5,7.17 L13,2" fill="none" stroke="#4a525e" stroke-width="2.2"/></svg>
<div style="left:2641px;top:1409px;width:112px;height:46px;border:2px solid #e3e6ea;background:#fff;border-radius:7px"></div>
<div class="t" style="left:2657.0px;top:1420.5px;font-size:24px;line-height:24px;color:#262d38;-webkit-text-stroke:0.3px #262d38;letter-spacing:-0.90px;">Less</div>
<svg style="position:absolute;left:2720px;top:1425px;" width="18" height="12" viewBox="0 0 18 12"><path d="M2,10 L9,3 L16,10" fill="none" stroke="#262d38" stroke-width="2.6"/></svg>
<div style="left:1786px;top:1466px;width:980px;height:2px;background:#e1e5ea"></div>
<div style="left:2418px;top:1480px;width:150px;height:48px;background:#3070c0;border-radius:7px"></div>
<div class="t" style="left:2476.8px;top:1492px;font-size:25px;line-height:25px;color:#fff;-webkit-text-stroke:0.65px #fff;letter-spacing:-2.92px;">OK</div>
<div style="left:2593px;top:1480px;width:148px;height:48px;border:2px solid #e3e6ea;background:#fff;border-radius:7px"></div>
<div class="t" style="left:2637.0px;top:1493px;font-size:24px;line-height:24px;color:#262d38;-webkit-text-stroke:0.3px #262d38;letter-spacing:-0.29px;">Close</div>
<div style="left:1986px;top:1334px;width:308px;height:192px;background:#fff;box-shadow:0 4px 12px rgba(0,0,0,0.18)"></div>
<div style="left:1986px;top:1334px;width:308px;height:48px;background:#ebf2fa"></div>
<div style="left:1986px;top:1478px;width:308px;height:48px;background:#e5e8ed"></div>
<div class="t" style="left:2003.3px;top:1347px;font-size:24px;line-height:24px;color:#2f6dbd;-webkit-text-stroke:0.65px #2f6dbd;letter-spacing:0.28px;">Sum</div>
<div class="t" style="left:2003.0px;top:1395px;font-size:24px;line-height:24px;color:#262d38;-webkit-text-stroke:0.3px #262d38;letter-spacing:1.41px;">Minimum</div>
<div class="t" style="left:2003.0px;top:1443px;font-size:24px;line-height:24px;color:#262d38;-webkit-text-stroke:0.3px #262d38;letter-spacing:1.16px;">Maximum</div>
<div class="t" style="left:2002.0px;top:1491px;font-size:24px;line-height:24px;color:#262d38;-webkit-text-stroke:0.3px #262d38;letter-spacing:0.07px;">Average</div>
<svg style="position:absolute;left:2160px;top:1505px;" width="44" height="58" viewBox="0 0 44 58"><path d="M16.3,41 V9.9 a2.65,2.65 0 0 1 5.3,0 V28 V20.2 a3.2,3.2 0 0 1 6.4,0 V28 V21.7 a3.2,3.2 0 0 1 6.4,0 V28 V22.6 a2.6,2.6 0 0 1 5.2,0 V40 C39.6,48 34,52.5 27,52.5 C21,52.5 17.5,49.5 14,45 L7.8,37 C6.2,34.5 9.5,31.5 12,33.5 L16.3,38 Z" fill="#fff" stroke="#111" stroke-width="1.5" stroke-linejoin="round"/><path d="M21.6,21 V29 M28,22.5 V29 M34.4,23.5 V29" stroke="#111" stroke-width="1.5"/></svg>
<div style="left:1833px;top:1284px;width:468px;height:259px;border:5px solid #e8141e"></div>
</body></html>
